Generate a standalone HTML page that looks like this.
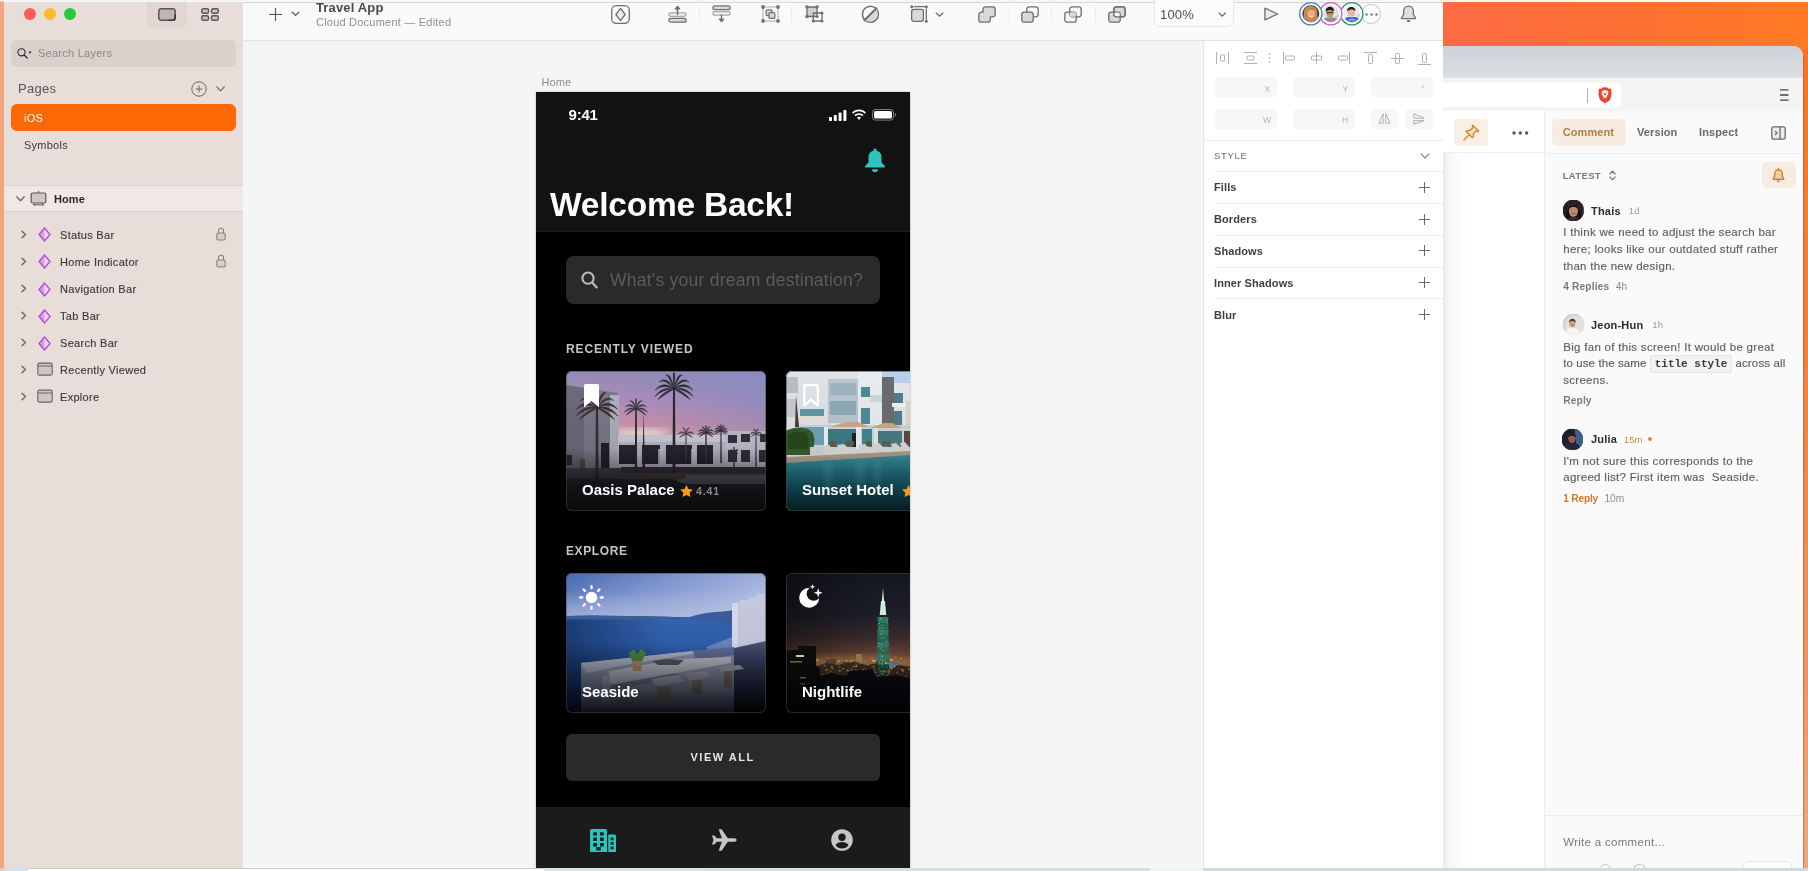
<!DOCTYPE html>
<html lang="en">
<head>
<meta charset="utf-8">
<title>Travel App</title>
<style>
*{box-sizing:border-box;margin:0;padding:0}
html,body{width:1808px;height:871px;overflow:hidden;background:#fff}
body{will-change:transform;font-family:"Liberation Sans",sans-serif;color:#3c3c3c;position:relative;-webkit-font-smoothing:antialiased}
.a{position:absolute}
.t{position:absolute;white-space:nowrap;line-height:16px;height:16px}
svg{position:absolute;overflow:visible}
/* ---------- base regions ---------- */
#leftstrip{left:0;top:0;width:4px;height:871px;background:#f3a67d}
#sidebar{left:3.5px;top:1.5px;width:239.500px;height:866.500px;background:#e8ddd8}
#toolbar{left:243px;top:1.5px;width:1200px;height:39px;background:#fafafa;border-bottom:1px solid #e2e2e2}
#canvas{left:243px;top:40.5px;width:960px;height:828px;background:#f5f5f5}
#inspector{left:1203px;top:40.5px;width:240px;height:828px;background:#fff;border-left:1px solid #e4e4e4}
#topline{left:0;top:0;width:1808px;height:2.500px;background:linear-gradient(90deg,transparent 0,transparent 243px,#d6d6d6 243px,#d6d6d6 1443px,transparent 1443px) 0 1.500px/100% 1px no-repeat,linear-gradient(#f6f4f3,#f6f4f3) 0 0/100% 1.500px no-repeat}
#botline{left:0;top:868px;width:1808px;height:3px;background:linear-gradient(90deg,#f2c4ac 0,#cfe3ea 8px,#cfe3ea 28px,transparent 28px),linear-gradient(90deg,#c9c9c6 0,#c9c9c6 544px,transparent 544px) 0 0/100% 1.400px no-repeat,linear-gradient(90deg,#fff 0,#fff 544px,#d6e3e6 544px,#d3e0e3 1150px,#eef3f3 1150px,#eef3f3 1203px,#cfdcdf 1203px)}
</style>
</head>
<body>
<div class="a" id="sidebar"></div>
<div class="a" id="toolbar"></div>
<div class="a" id="canvas"></div>
<div class="a" id="inspector"></div>
<div class="a" id="leftstrip"></div>
<div class="a" id="topline"></div>

<!--SIDEBAR-->
<style>
.sb{color:#4b4542;font-size:11px}
.chev{stroke:#6b6460;stroke-width:1.3;fill:none;stroke-linecap:round;stroke-linejoin:round}
</style>
<div class="a" style="left:24px;top:8px;width:12px;height:12px;border-radius:50%;background:#fd5d57"></div>
<div class="a" style="left:44px;top:8px;width:12px;height:12px;border-radius:50%;background:#fdbc2e"></div>
<div class="a" style="left:64px;top:8px;width:12px;height:12px;border-radius:50%;background:#28c840"></div>
<div class="a" style="left:146.5px;top:1.5px;width:40.5px;height:26px;border-radius:0 0 6px 6px;background:#e1d6d1"></div>
<svg style="left:158px;top:7.5px" width="18" height="13" viewBox="0 0 18 13"><rect x=".8" y=".8" width="16.4" height="11.4" rx="2.6" fill="#bdb6b2" stroke="#5d5753" stroke-width="1.5"/><path d="M10.5 12.2h4.1a2.6 2.6 0 0 0 2.6-2.6V6.5" fill="none" stroke="#3d3835" stroke-width="1.6"/></svg>
<svg style="left:201px;top:7.5px" width="18" height="13" viewBox="0 0 18 13"><g fill="#cbc2bd" stroke="#5d5753" stroke-width="1.4"><rect x=".7" y=".7" width="6.8" height="4.6" rx="1.6"/><rect x="10.5" y=".7" width="6.8" height="4.6" rx="1.6"/><rect x=".7" y="7.7" width="6.8" height="4.6" rx="1.6"/><rect x="10.5" y="7.7" width="6.8" height="4.6" rx="1.6"/></g></svg>
<!-- search -->
<div class="a" style="left:11.200px;top:40px;width:224.800px;height:26.500px;border-radius:5px;background:#dbd0cb"></div>
<svg style="left:16.5px;top:48px" width="16" height="11" viewBox="0 0 16 11"><circle cx="4.500" cy="4.300" r="3.600" fill="none" stroke="#2e2a28" stroke-width="1.100"/><path d="M7.200 7l3 3" stroke="#2e2a28" stroke-width="1.300" stroke-linecap="round"/><path d="M11.3 3.6h3.4l-1.7 2.2z" fill="#2e2a28"/></svg>
<div class="t sb" style="left:38px;top:45px;color:#8f8783;letter-spacing:.25px">Search Layers</div>
<!-- pages -->
<div class="t" style="left:18px;top:80.5px;font-size:13px;color:#5d5652;letter-spacing:.3px">Pages</div>
<svg style="left:190.5px;top:80.5px" width="16" height="16" viewBox="0 0 16 16"><circle cx="8" cy="8" r="7.2" fill="none" stroke="#6b6460" stroke-width="1"/><path d="M8 4.6v6.8M4.6 8h6.8" stroke="#6b6460" stroke-width="1"/></svg>
<svg style="left:216px;top:85.5px" width="9" height="6" viewBox="0 0 9 6"><path class="chev" d="M.7.8l3.8 4 3.8-4" style="stroke-width:1.1"/></svg>
<div class="a" style="left:11.200px;top:103.700px;width:224.800px;height:27px;border-radius:6px;background:#fc6806"></div>
<div class="t sb" style="left:24px;top:109.7px;color:#fff;letter-spacing:.2px">iOS</div>
<div class="t sb" style="left:24px;top:137px;letter-spacing:.25px;color:#3f3a37">Symbols</div>
<!-- home row -->
<div class="a" style="left:3.5px;top:184.5px;width:239.5px;height:27.5px;background:#efe8e4;border-top:1px solid #ddd2cc;border-bottom:1px solid #ddd2cc"></div>
<svg style="left:15.5px;top:195.5px" width="9" height="6" viewBox="0 0 9 6"><path class="chev" d="M.8.8l3.7 3.9L8.2.8"/></svg>
<svg style="left:30px;top:190.5px" width="17" height="15" viewBox="0 0 17 15"><path d="M8.5 0v2M4.5 12.5l-.8 2M12.5 12.5l.8 2" stroke="#5d5753" stroke-width="1.1"/><rect x="1.2" y="2" width="14.6" height="10" rx="1.5" fill="#cfc9c5" stroke="#5d5753" stroke-width="1.2"/><path d="M3.5 13.8h10" stroke="#5d5753" stroke-width="1"/></svg>
<div class="t sb" style="left:54px;top:191px;font-weight:bold;color:#2b2725;letter-spacing:.1px">Home</div>
<svg style="left:21px;top:230.1px" width="6" height="9" viewBox="0 0 6 9"><path class="chev" d="M1 1.200l3.500 3.300L1 7.800" style="stroke-width:1.400"/></svg>
<svg style="left:38px;top:226.4px" width="13" height="16" viewBox="0 0 13 16"><path d="M6.500 2L12 8.500l-5.500 6.500L1 8.500z" fill="#f3d8f8"/><path d="M6.500 2L1 8.500l5.500 6.500z" fill="#dc9bee"/><path d="M6.500 2L12 8.500l-5.500 6.500L1 8.500z" fill="none" stroke="#b04fd0" stroke-width="1.300" stroke-linejoin="round"/></svg>
<div class="t sb" style="left:60px;top:226.9px;letter-spacing:.3px;color:#3f3a37;-webkit-text-stroke:.15px #3f3a37">Status Bar</div>
<svg style="left:215.500px;top:226.8px" width="10" height="14" viewBox="0 0 10 14"><path d="M2.500 6V3.800a2.500 2.500 0 0 1 5 0V6" fill="none" stroke="#8a827d" stroke-width="1.100"/><rect x=".8" y="6" width="8.400" height="7" rx="1.500" fill="#d8cfca" stroke="#8a827d" stroke-width="1.100"/></svg>
<svg style="left:21px;top:257.1px" width="6" height="9" viewBox="0 0 6 9"><path class="chev" d="M1 1.200l3.500 3.300L1 7.800" style="stroke-width:1.400"/></svg>
<svg style="left:38px;top:253.4px" width="13" height="16" viewBox="0 0 13 16"><path d="M6.500 2L12 8.500l-5.500 6.500L1 8.500z" fill="#f3d8f8"/><path d="M6.500 2L1 8.500l5.500 6.500z" fill="#dc9bee"/><path d="M6.500 2L12 8.500l-5.500 6.500L1 8.500z" fill="none" stroke="#b04fd0" stroke-width="1.300" stroke-linejoin="round"/></svg>
<div class="t sb" style="left:60px;top:253.9px;letter-spacing:.3px;color:#3f3a37;-webkit-text-stroke:.15px #3f3a37">Home Indicator</div>
<svg style="left:215.500px;top:253.8px" width="10" height="14" viewBox="0 0 10 14"><path d="M2.500 6V3.800a2.500 2.500 0 0 1 5 0V6" fill="none" stroke="#8a827d" stroke-width="1.100"/><rect x=".8" y="6" width="8.400" height="7" rx="1.500" fill="#d8cfca" stroke="#8a827d" stroke-width="1.100"/></svg>
<svg style="left:21px;top:284.2px" width="6" height="9" viewBox="0 0 6 9"><path class="chev" d="M1 1.200l3.500 3.300L1 7.800" style="stroke-width:1.400"/></svg>
<svg style="left:38px;top:280.5px" width="13" height="16" viewBox="0 0 13 16"><path d="M6.500 2L12 8.500l-5.500 6.500L1 8.500z" fill="#f3d8f8"/><path d="M6.500 2L1 8.500l5.500 6.500z" fill="#dc9bee"/><path d="M6.500 2L12 8.500l-5.500 6.500L1 8.500z" fill="none" stroke="#b04fd0" stroke-width="1.300" stroke-linejoin="round"/></svg>
<div class="t sb" style="left:60px;top:281.0px;letter-spacing:.3px;color:#3f3a37;-webkit-text-stroke:.15px #3f3a37">Navigation Bar</div>
<svg style="left:21px;top:311.2px" width="6" height="9" viewBox="0 0 6 9"><path class="chev" d="M1 1.200l3.500 3.300L1 7.800" style="stroke-width:1.400"/></svg>
<svg style="left:38px;top:307.5px" width="13" height="16" viewBox="0 0 13 16"><path d="M6.500 2L12 8.500l-5.500 6.500L1 8.500z" fill="#f3d8f8"/><path d="M6.500 2L1 8.500l5.500 6.500z" fill="#dc9bee"/><path d="M6.500 2L12 8.500l-5.500 6.500L1 8.500z" fill="none" stroke="#b04fd0" stroke-width="1.300" stroke-linejoin="round"/></svg>
<div class="t sb" style="left:60px;top:308.0px;letter-spacing:.3px;color:#3f3a37;-webkit-text-stroke:.15px #3f3a37">Tab Bar</div>
<svg style="left:21px;top:338.2px" width="6" height="9" viewBox="0 0 6 9"><path class="chev" d="M1 1.200l3.500 3.300L1 7.800" style="stroke-width:1.400"/></svg>
<svg style="left:38px;top:334.5px" width="13" height="16" viewBox="0 0 13 16"><path d="M6.500 2L12 8.500l-5.500 6.500L1 8.500z" fill="#f3d8f8"/><path d="M6.500 2L1 8.500l5.500 6.500z" fill="#dc9bee"/><path d="M6.500 2L12 8.500l-5.500 6.500L1 8.500z" fill="none" stroke="#b04fd0" stroke-width="1.300" stroke-linejoin="round"/></svg>
<div class="t sb" style="left:60px;top:335.0px;letter-spacing:.3px;color:#3f3a37;-webkit-text-stroke:.15px #3f3a37">Search Bar</div>
<svg style="left:21px;top:365.1px" width="6" height="9" viewBox="0 0 6 9"><path class="chev" d="M1 1.200l3.500 3.300L1 7.800" style="stroke-width:1.400"/></svg>
<svg style="left:36.500px;top:362.3px" width="16" height="14" viewBox="0 0 16 14"><path d="M.8 2.600a1.500 1.500 0 0 1 1.500-1.500h11.400a1.500 1.500 0 0 1 1.500 1.500v9a1.500 1.500 0 0 1-1.500 1.500H2.300a1.500 1.500 0 0 1-1.500-1.500z" fill="#cfc7c3" stroke="#6b6460" stroke-width="1.100"/><path d="M.8 4h14.400" stroke="#6b6460" stroke-width="1"/></svg>
<div class="t sb" style="left:60px;top:361.9px;letter-spacing:.3px;color:#3f3a37;-webkit-text-stroke:.15px #3f3a37">Recently Viewed</div>
<svg style="left:21px;top:392.0px" width="6" height="9" viewBox="0 0 6 9"><path class="chev" d="M1 1.200l3.500 3.300L1 7.800" style="stroke-width:1.400"/></svg>
<svg style="left:36.500px;top:389.2px" width="16" height="14" viewBox="0 0 16 14"><path d="M.8 2.600a1.500 1.500 0 0 1 1.500-1.500h11.400a1.500 1.500 0 0 1 1.500 1.500v9a1.500 1.500 0 0 1-1.500 1.500H2.300a1.500 1.500 0 0 1-1.500-1.500z" fill="#cfc7c3" stroke="#6b6460" stroke-width="1.100"/><path d="M.8 4h14.400" stroke="#6b6460" stroke-width="1"/></svg>
<div class="t sb" style="left:60px;top:388.8px;letter-spacing:.3px;color:#3f3a37;-webkit-text-stroke:.15px #3f3a37">Explore</div>

<!--TOOLBAR-->
<style>
.ti{stroke:#6e6e6e;stroke-width:1.3;fill:none;stroke-linejoin:round;stroke-linecap:round}
.tf{fill:#d9d9d9}
.tsep{position:absolute;top:6px;width:1px;height:17px;background:#ececec}
</style>
<svg style="left:269px;top:8px" width="13" height="13" viewBox="0 0 13 13"><path d="M6.500 0v13M0 6.500h13" stroke="#555" stroke-width="1.1"/></svg>
<svg style="left:291px;top:11px" width="9" height="6" viewBox="0 0 9 6"><path d="M.8.800l3.700 3.600L8.200.8" stroke="#555" stroke-width="1.2" fill="none"/></svg>
<div class="t" style="left:316px;top:-.2px;font-size:13px;font-weight:bold;color:#4a4a4a;letter-spacing:.150px">Travel App</div>
<div class="t" style="left:316px;top:14px;font-size:11px;color:#8e8e8e;letter-spacing:.22px">Cloud Document — Edited</div>
<!-- create symbol -->
<svg style="left:611px;top:4.500px" width="19" height="19" viewBox="0 0 19 19"><rect x=".7" y=".7" width="17.600" height="17.600" rx="4.500" class="ti"/><path class="ti" d="M9.500 3.400l4.600 6.100-4.600 6.100-4.600-6.100z" style="fill:#ececec"/></svg>
<!-- forward -->
<svg style="left:668px;top:5px" width="19" height="18" viewBox="0 0 19 18"><path d="M9.500 1.500v8" class="ti"/><path d="M7 4L9.500 1l2.500 3z" fill="#6e6e6e" stroke="#6e6e6e" stroke-width="1" stroke-linejoin="round"/><rect x=".9" y="7.800" width="17.200" height="3.600" rx="1.800" class="ti" style="stroke:#a8a8a8;fill:#f0f0f0"/><path d="M9.500 5v4.500" class="ti"/><rect x=".9" y="13.300" width="17.200" height="3.800" rx="1.900" class="ti tf"/></svg>
<div class="tsep" style="left:699px"></div>
<!-- backward -->
<svg style="left:711.500px;top:5px" width="19" height="18" viewBox="0 0 19 18"><rect x=".9" y=".9" width="17.200" height="3.800" rx="1.900" class="ti tf"/><rect x=".9" y="6.600" width="17.200" height="3.600" rx="1.800" class="ti" style="stroke:#a8a8a8;fill:#f0f0f0"/><path d="M9.500 10.200v6" class="ti"/><path d="M7 14L9.500 17l2.500-3z" fill="#6e6e6e" stroke="#6e6e6e" stroke-width="1" stroke-linejoin="round"/></svg>
<!-- group -->
<svg style="left:761px;top:5px" width="19" height="18" viewBox="0 0 19 18"><path class="ti" d="M2 2h15v14H2z" style="stroke:#9a9a9a;stroke-width:1;stroke-dasharray:1.500 1.200"/><g fill="#727272"><circle cx="2" cy="2" r="1.900"/><circle cx="17" cy="2" r="1.900"/><circle cx="2" cy="16" r="1.900"/><circle cx="17" cy="16" r="1.900"/></g><rect x="5.200" y="4.800" width="5.800" height="5.800" rx="1.200" class="ti tf"/><rect x="8" y="7.600" width="5.800" height="5.800" rx="1.200" class="ti tf"/></svg>
<div class="tsep" style="left:791px"></div>
<!-- ungroup -->
<svg style="left:804.500px;top:5px" width="19" height="18" viewBox="0 0 19 18"><rect x="2" y="2" width="10" height="9.500" class="ti" style="fill:#cfcfcf"/><rect x="8.300" y="8" width="8.700" height="8" class="ti"/><g fill="#727272"><circle cx="2" cy="2" r="1.800"/><circle cx="12" cy="2" r="1.800"/><circle cx="2" cy="11.500" r="1.800"/><circle cx="12" cy="11.500" r="1.500"/><circle cx="8.300" cy="16" r="1.600"/><circle cx="17" cy="8" r="1.600"/><circle cx="17" cy="16" r="1.600"/></g></svg>
<!-- edit (circle slash) -->
<svg style="left:861px;top:5px" width="19" height="19" viewBox="0 0 19 19"><circle cx="9.400" cy="9.200" r="8" class="ti" style="stroke-width:1.500"/><path d="M3.900 14.900A8 8 0 0 0 15.100 3.700z" class="tf"/><path d="M3.400 15.200L15.400 3.200" class="ti" style="stroke-width:2"/></svg>
<!-- rotate/transform -->
<svg style="left:909.500px;top:5px" width="19" height="18" viewBox="0 0 19 18"><path class="ti" d="M4 1.700h10.500M16.300 4v10.500" stroke-dasharray="0"/><rect x="1.600" y="4.300" width="11.800" height="12" rx="2.200" class="ti tf"/><g fill="#6e6e6e"><circle cx="1.700" cy="1.700" r="1.500"/><circle cx="16.300" cy="1.700" r="1.500"/><circle cx="16.300" cy="16.300" r="1.500"/></g></svg>
<svg style="left:934.500px;top:11.500px" width="9" height="6" viewBox="0 0 9 6"><path d="M.8.800l3.700 3.400L8.200.8" stroke="#666" stroke-width="1.200" fill="none"/></svg>
<!-- boolean ops -->
<svg style="left:978px;top:5.500px" width="18" height="17" viewBox="0 0 18 17"><path class="ti tf" d="M7.500.8h7.200a2.500 2.500 0 0 1 2.500 2.500v5a2.500 2.500 0 0 1-2.500 2.500h-2.400v2.900a2.500 2.500 0 0 1-2.500 2.500H3.300a2.500 2.500 0 0 1-2.500-2.500v-5a2.500 2.500 0 0 1 2.500-2.500H5V3.300A2.500 2.500 0 0 1 7.500.8z"/></svg>
<div class="tsep" style="left:1009px"></div>
<svg style="left:1021px;top:5.500px" width="18" height="17" viewBox="0 0 18 17"><rect x="5.800" y=".8" width="11.400" height="10" rx="2.500" class="ti" fill="#fafafa"/><rect x=".8" y="6.200" width="11.400" height="10" rx="2.500" class="ti tf"/></svg>
<div class="tsep" style="left:1051px"></div>
<svg style="left:1064px;top:5.500px" width="18" height="17" viewBox="0 0 18 17"><rect x="5.800" y=".8" width="11.400" height="10" rx="2.500" class="ti" fill="none"/><rect x=".8" y="6.200" width="11.400" height="10" rx="2.500" class="ti" fill="none"/><rect x="5.800" y="6.200" width="6.400" height="4.600" rx="1.500" class="tf"/></svg>
<div class="tsep" style="left:1094.500px"></div>
<svg style="left:1107.500px;top:5.500px" width="18" height="17" viewBox="0 0 18 17"><rect x="5.800" y=".8" width="11.400" height="10" rx="2.500" class="ti tf"/><rect x=".8" y="6.200" width="11.400" height="10" rx="2.500" class="ti tf"/><rect x="6.400" y="6.800" width="5.200" height="3.400" rx="1" fill="#fafafa"/><rect x="5.800" y=".8" width="11.400" height="10" rx="2.500" class="ti" fill="none"/></svg>
<!-- zoom -->
<div class="a" style="left:1153.500px;top:-4px;width:80.500px;height:31px;border:1px solid #e6e6e6;border-radius:6px;background:#fcfcfc"></div>
<div class="t" style="left:1160px;top:6.500px;font-size:13px;color:#4d4d4d;letter-spacing:.2px">100%</div>
<svg style="left:1217.500px;top:11.500px" width="9" height="6" viewBox="0 0 9 6"><path d="M.8.800l3.400 3.300L7.600.8" stroke="#666" stroke-width="1.200" fill="none"/></svg>
<!-- play -->
<svg style="left:1263.500px;top:7px" width="15" height="14" viewBox="0 0 15 14"><path d="M.9 1.100l12.800 5.900L.9 12.900z" class="ti" style="fill:#ececec"/></svg>
<!-- avatars -->
<div class="a" style="left:1361.200px;top:4.100px;width:19.600px;height:19.600px;border-radius:50%;background:#fcfcfc;border:1.200px solid #c6c6c6"></div>
<svg style="left:1363.500px;top:12.500px" width="15" height="3" viewBox="0 0 15 3"><g fill="#7c7c7c"><circle cx="2.500" cy="1.500" r="1.250"/><circle cx="7.500" cy="1.500" r="1.250"/><circle cx="12.500" cy="1.500" r="1.250"/></g></svg>
<svg style="left:1339.80px;top:2.10px" width="23.60" height="23.60" viewBox="-11.80 -11.80 23.60 23.60"><defs><clipPath id="avb"><circle r="9.20"/></clipPath></defs><circle r="11.70" fill="#fdfdfd"/><circle r="11.15" fill="none" stroke="#2f9460" stroke-width="1.3"/><g clip-path="url(#avb)" transform="scale(0.920)"><rect x="-10" y="-10" width="20" height="20" fill="#e9eef3"/><path d="M-10 10C-9 3.500-4 3 0 4 4 3 9 3.500 10 10z" fill="#3d66d8"/><ellipse cx="-.5" cy="-1.500" rx="4" ry="4.800" fill="#e2b9a0"/><path d="M-5-2.500C-6-9 4.500-9 4-3 1.500-5.200-2-5.500-5-2.500z" fill="#2a2220"/><path d="M4 2C7-1 9 0 10 2V5z" fill="#cfd6de"/><path d="M-3 6.500h6" stroke="#9db4f0" stroke-width="1.500"/></g></svg>
<svg style="left:1319.20px;top:2.10px" width="23.60" height="23.60" viewBox="-11.80 -11.80 23.60 23.60"><defs><clipPath id="avg"><circle r="9.20"/></clipPath></defs><circle r="11.70" fill="#fdfdfd"/><circle r="11.15" fill="none" stroke="#cf5fc4" stroke-width="1.3"/><g clip-path="url(#avg)" transform="scale(0.920)"><rect x="-10" y="-10" width="20" height="20" fill="#dfe4e1"/><path d="M-10 10C-9 4-4 3.500-1 4.500 3 3.500 8 4.500 10 10z" fill="#8d8f92"/><ellipse cx="-1" cy="-1" rx="4" ry="5" fill="#c2906f"/><path d="M-5.500-2.500C-6-9 4-9.500 3.500-2.500 1-4.800-3-4.800-5.500-2.500z" fill="#1e1a19"/><path d="M-4.800-1.200H2.800" stroke="#2a2422" stroke-width="1.100"/><path d="M3 4L10 0V6z" fill="#c9ccc9"/></g></svg>
<svg style="left:1298.70px;top:2.10px" width="23.60" height="23.60" viewBox="-11.80 -11.80 23.60 23.60"><defs><clipPath id="avw"><circle r="9.20"/></clipPath></defs><circle r="11.70" fill="#fdfdfd"/><circle r="11.15" fill="none" stroke="#3a80d6" stroke-width="1.3"/><g clip-path="url(#avw)" transform="scale(0.920)"><rect x="-10" y="-10" width="20" height="20" fill="#3b2b22"/><path d="M-7.500-2C-7.500-10 5.500-11 7-3L8 10H-8.500z" fill="#c48a55"/><ellipse cx=".5" cy="-.5" rx="4.200" ry="5.200" fill="#e3b08c"/><path d="M-4.300-3C-2-7.500 3-7.500 4.800-3 2-4.800-1-5.200-4.300-3z" fill="#b67a48"/><path d="M-10 10C-8 5.500-3 5 0 6.500 3 5 8 5.500 10 10z" fill="#e2793f"/><path d="M-1.500 2.400Q.5 3.900 2.500 2.400" stroke="#fff" stroke-width="1" fill="none"/></g></svg>

<!-- bell -->
<svg style="left:1399.500px;top:5px" width="17" height="18" viewBox="0 0 17 18"><path class="ti" style="fill:#dedede" d="M8.500 1.200c-3 0-4.900 2.200-4.900 5.100v3.200L1.600 12.600c-.3.500 0 1.100.6 1.100h12.600c.6 0 .9-.6.600-1.100L13.400 9.500V6.300c0-2.900-1.900-5.100-4.900-5.100z"/><path d="M6.500 15.300a2 2 0 0 0 4 0z" fill="#6e6e6e"/></svg>

<!--PHONE-->
<style>
#ab{left:536px;top:92px;width:374.300px;height:775.500px;background:#000;overflow:hidden;box-shadow:0 0 0 1px rgba(0,0,0,.05),0 1px 4px rgba(0,0,0,.12)}
#ab .hd{left:0;top:0;width:375px;height:139.500px;background:#121212;border-bottom:1px solid #1d1d1d}
.ph{color:#fff;font-weight:bold}
.card{position:absolute;width:200px;height:139.500px;border-radius:6px;overflow:hidden;background:#222;box-shadow:inset 0 0 0 1px rgba(255,255,255,.08)}
.card svg{left:0;top:0}
.card .ov{position:absolute;left:0;top:0;width:100%;height:100%;border-radius:6px;box-shadow:inset 0 0 0 1px rgba(70,70,70,.55)}
.sec{position:absolute;font-size:12px;font-weight:bold;color:#c4c4c4;letter-spacing:.900px;white-space:nowrap;line-height:14px}
.ct{position:absolute;font-size:15px;font-weight:bold;color:#fff;white-space:nowrap;line-height:16px;letter-spacing:0}
</style>
<div class="t" style="left:541.500px;top:74px;font-size:11px;color:#8c8c8c;letter-spacing:.1px">Home</div>
<div class="a" id="ab">
 <div class="a hd"></div>
 <div class="t ph" style="left:32.500px;top:15px;font-size:15px;letter-spacing:-.2px">9:41</div>
 <!-- status icons -->
 <svg style="left:293px;top:17.500px" width="18" height="11" viewBox="0 0 18 11"><g fill="#fff"><rect x="0" y="7" width="3" height="4" rx=".8"/><rect x="4.800" y="5" width="3" height="6" rx=".8"/><rect x="9.600" y="2.600" width="3" height="8.400" rx=".8"/><rect x="14.400" y="0" width="3" height="11" rx=".8"/></g></svg>
 <svg style="left:315px;top:17px" width="16" height="12" viewBox="0 0 16 12"><path d="M8 2.300c2.300 0 4.400.9 5.900 2.400l1.100-1.200C13.200 1.700 10.700.6 8 .6S2.800 1.700 1 3.500l1.100 1.200C3.600 3.200 5.700 2.300 8 2.300zm0 3.600c1.300 0 2.500.5 3.400 1.400l1.100-1.200C11.300 4.900 9.700 4.200 8 4.200s-3.300.7-4.500 1.900l1.100 1.200c.9-.9 2.100-1.400 3.400-1.400zM8 7.700c-.8 0-1.500.3-2 .9L8 11l2-2.400c-.5-.6-1.200-.9-2-.9z" fill="#fff"/></svg>
 <svg style="left:335.500px;top:17.300px" width="25" height="12" viewBox="0 0 25 12"><rect x=".5" y=".5" width="21" height="10.600" rx="3" fill="none" stroke="rgba(255,255,255,.45)" stroke-width="1"/><rect x="2" y="2" width="18" height="7.600" rx="1.700" fill="#fff"/><path d="M22.800 4v3.600c.8-.3 1.300-1 1.300-1.800s-.5-1.500-1.300-1.800z" fill="rgba(255,255,255,.5)"/></svg>
 <!-- bell -->
 <svg style="left:328px;top:56px" width="22" height="25" viewBox="0 0 22 25"><path fill="#2ec4bd" d="M11 .6c-.9 0-1.500.6-1.500 1.400v.5C6.400 3.200 4.500 5.900 4.500 9.200v5.200L1.100 18c-.5.600-.1 1.500.7 1.500h18.400c.8 0 1.200-.9.700-1.500l-3.400-3.600V9.200c0-3.300-1.900-6-5-6.700V2c0-.8-.6-1.400-1.500-1.400zM8 21.200a3 3 0 0 0 6 0z"/></svg>
 <div class="t ph" id="wb" style="left:14px;top:93px;font-size:33.500px;line-height:40px;height:40px;letter-spacing:-.230px">Welcome Back!</div>
 <!-- search -->
 <div class="a" style="left:30px;top:164px;width:314px;height:47.500px;border-radius:8px;background:#2a2a2a"></div>
 <svg style="left:45px;top:179px" width="17" height="18" viewBox="0 0 17 18"><circle cx="7" cy="7.200" r="5.600" fill="none" stroke="#bdbdbd" stroke-width="2"/><path d="M11.200 11.600l4.500 4.800" stroke="#bdbdbd" stroke-width="2.200" stroke-linecap="round"/></svg>
 <div class="t" id="plh" style="left:74px;top:177.500px;font-size:17.500px;line-height:20px;height:20px;color:#5c5c5c;letter-spacing:.250px">What's your dream destination?</div>

 <div class="sec" id="rv" style="left:30px;top:250px">RECENTLY VIEWED</div>
 <div class="card" id="c1" style="left:30px;top:279.400px"><!--C1--><svg width="200" height="140" viewBox="0 0 200 140"><defs><linearGradient id="s1" x1="0" y1="0" x2="0" y2="1"><stop offset="0" stop-color="#8f8bb8"/><stop offset=".45" stop-color="#b893c4"/><stop offset=".75" stop-color="#e39ab4"/><stop offset="1" stop-color="#f4c0b8"/></linearGradient><linearGradient id="s1b" x1="0" y1="0" x2="1" y2="0"><stop offset="0" stop-color="#9a86b0" stop-opacity=".0"/><stop offset="1" stop-color="#7f8fc8" stop-opacity=".55"/></linearGradient><linearGradient id="g1" x1="0" y1="0" x2="0" y2="1"><stop offset="0" stop-color="#000" stop-opacity="0"/><stop offset=".55" stop-color="#000" stop-opacity=".1"/><stop offset=".8" stop-color="#000" stop-opacity=".6"/><stop offset="1" stop-color="#000" stop-opacity=".82"/></linearGradient><filter id="b1" x="-5%" y="-5%" width="110%" height="110%"><feGaussianBlur stdDeviation=".7"/></filter><filter id="b1b" x="-20%" y="-20%" width="140%" height="140%"><feGaussianBlur stdDeviation="4"/></filter></defs><rect width="200" height="70" fill="url(#s1)"/><rect width="200" height="70" fill="url(#s1b)"/><ellipse cx="75" cy="63" rx="28" ry="5" fill="#fff3e6" filter="url(#b1b)" opacity=".9"/><g filter="url(#b1)"><!-- left wall --><path d="M0 14L40 20L52 22V108H0z" fill="#7d7c8c"/><path d="M0 14L18 17V108H0z" fill="#6e6d7c"/><rect x="44" y="24" width="9" height="84" fill="#b4b3c2"/><rect x="35" y="72" width="8" height="36" fill="#23222a"/><rect x="0" y="84" width="6" height="10" fill="#2b2a33"/><rect x="14" y="88" width="5" height="20" fill="#56533f"/><!-- main building --><rect x="52" y="64" width="112" height="34" fill="#bdbccb"/><rect x="52" y="64" width="112" height="7" fill="#d2d1de"/><g fill="#2a2830"><rect x="53" y="74" width="17" height="19"/><rect x="76" y="74" width="18" height="19"/><rect x="100" y="74" width="26" height="19"/><rect x="131" y="74" width="16" height="19"/></g><g fill="#c9c8d4" opacity=".8"><rect x="92" y="78" width="5" height="18"/><rect x="125" y="78" width="5" height="18"/><rect x="70" y="80" width="4" height="16"/></g><!-- right building --><rect x="159" y="60" width="41" height="38" fill="#c4c3d2"/><g fill="#34323c"><rect x="162" y="64" width="9" height="8"/><rect x="175" y="63" width="9" height="8"/><rect x="194" y="63" width="6" height="8"/><rect x="162" y="79" width="9" height="12"/><rect x="175" y="79" width="9" height="12"/><rect x="193" y="79" width="7" height="12"/></g><!-- ground --><rect x="0" y="97" width="200" height="43" fill="#4b4953"/><rect x="55" y="96" width="145" height="6" fill="#3a3842"/><path d="M120 104H200V113H105z" fill="#74727f"/><path d="M0 108H105L120 113H200V140H0z" fill="#34333b"/><rect x="78" y="105" width="42" height="2.500" fill="#5b4b3a"/><!-- palms --><path d="M29.9 36L32.0 36L32.6 108L29.4 108z" fill="#3a2f35"/><path d="M31 37Q20.2 38.9 13.3 48.7Q22.3 41.9 31 37z" fill="#3a2f35" stroke="#3a2f35" stroke-width=".5" stroke-linejoin="round"/><path d="M31 37Q18.7 33.3 10.0 45.0Q20.2 36.8 31 37z" fill="#3a2f35" stroke="#3a2f35" stroke-width=".5" stroke-linejoin="round"/><path d="M31 37Q19.5 27.2 10.4 38.1Q19.8 30.9 31 37z" fill="#3a2f35" stroke="#3a2f35" stroke-width=".5" stroke-linejoin="round"/><path d="M31 37Q22.6 21.9 14.5 29.4Q21.2 25.3 31 37z" fill="#3a2f35" stroke="#3a2f35" stroke-width=".5" stroke-linejoin="round"/><path d="M31 37Q27.5 18.7 21.8 21.8Q24.4 20.8 31 37z" fill="#3a2f35" stroke="#3a2f35" stroke-width=".5" stroke-linejoin="round"/><path d="M31 37Q32.9 18.4 31.0 18.8Q29.1 18.4 31 37z" fill="#3a2f35" stroke="#3a2f35" stroke-width=".5" stroke-linejoin="round"/><path d="M31 37Q37.6 20.8 40.2 21.8Q34.5 18.7 31 37z" fill="#3a2f35" stroke="#3a2f35" stroke-width=".5" stroke-linejoin="round"/><path d="M31 37Q40.8 25.3 47.5 29.4Q39.4 21.9 31 37z" fill="#3a2f35" stroke="#3a2f35" stroke-width=".5" stroke-linejoin="round"/><path d="M31 37Q42.2 30.9 51.6 38.1Q42.5 27.2 31 37z" fill="#3a2f35" stroke="#3a2f35" stroke-width=".5" stroke-linejoin="round"/><path d="M31 37Q41.8 36.8 52.0 45.0Q43.3 33.3 31 37z" fill="#3a2f35" stroke="#3a2f35" stroke-width=".5" stroke-linejoin="round"/><path d="M31 37Q39.7 41.9 48.7 48.7Q41.8 38.9 31 37z" fill="#3a2f35" stroke="#3a2f35" stroke-width=".5" stroke-linejoin="round"/><path d="M69.2 37L70.8 37L71.2 101L68.8 101z" fill="#352c34"/><path d="M70 38Q64.1 38.6 60.3 44.0Q65.3 40.2 70 38z" fill="#352c34" stroke="#352c34" stroke-width=".5" stroke-linejoin="round"/><path d="M70 38Q63.3 34.7 58.4 41.1Q64.0 36.6 70 38z" fill="#352c34" stroke="#352c34" stroke-width=".5" stroke-linejoin="round"/><path d="M70 38Q64.4 30.6 59.6 35.8Q64.2 32.7 70 38z" fill="#352c34" stroke="#352c34" stroke-width=".5" stroke-linejoin="round"/><path d="M70 38Q67.4 27.9 63.9 30.1Q65.9 29.2 70 38z" fill="#352c34" stroke="#352c34" stroke-width=".5" stroke-linejoin="round"/><path d="M70 38Q71.0 27.4 70.0 27.6Q69.0 27.4 70 38z" fill="#352c34" stroke="#352c34" stroke-width=".5" stroke-linejoin="round"/><path d="M70 38Q74.1 29.2 76.1 30.1Q72.6 27.9 70 38z" fill="#352c34" stroke="#352c34" stroke-width=".5" stroke-linejoin="round"/><path d="M70 38Q75.8 32.7 80.4 35.8Q75.6 30.6 70 38z" fill="#352c34" stroke="#352c34" stroke-width=".5" stroke-linejoin="round"/><path d="M70 38Q76.0 36.6 81.6 41.1Q76.7 34.7 70 38z" fill="#352c34" stroke="#352c34" stroke-width=".5" stroke-linejoin="round"/><path d="M70 38Q74.7 40.2 79.7 44.0Q75.9 38.6 70 38z" fill="#352c34" stroke="#352c34" stroke-width=".5" stroke-linejoin="round"/><path d="M77.500 40L79 97H76.500z" fill="#2d2a30"/><path d="M107.0 17L109.0 17L109.5 102L106.5 102z" fill="#2f2a33"/><path d="M108 18Q98.1 19.6 91.9 28.6Q100.1 22.4 108 18z" fill="#2f2a33" stroke="#2f2a33" stroke-width=".5" stroke-linejoin="round"/><path d="M108 18Q96.8 14.6 88.9 25.2Q98.2 17.7 108 18z" fill="#2f2a33" stroke="#2f2a33" stroke-width=".5" stroke-linejoin="round"/><path d="M108 18Q97.5 9.0 89.2 18.9Q97.9 12.4 108 18z" fill="#2f2a33" stroke="#2f2a33" stroke-width=".5" stroke-linejoin="round"/><path d="M108 18Q100.4 4.1 93.0 11.0Q99.1 7.3 108 18z" fill="#2f2a33" stroke="#2f2a33" stroke-width=".5" stroke-linejoin="round"/><path d="M108 18Q104.8 1.3 99.7 4.1Q102.0 3.1 108 18z" fill="#2f2a33" stroke="#2f2a33" stroke-width=".5" stroke-linejoin="round"/><path d="M108 18Q109.7 1.0 108.0 1.4Q106.3 1.0 108 18z" fill="#2f2a33" stroke="#2f2a33" stroke-width=".5" stroke-linejoin="round"/><path d="M108 18Q114.0 3.1 116.3 4.1Q111.2 1.3 108 18z" fill="#2f2a33" stroke="#2f2a33" stroke-width=".5" stroke-linejoin="round"/><path d="M108 18Q116.9 7.3 123.0 11.0Q115.6 4.1 108 18z" fill="#2f2a33" stroke="#2f2a33" stroke-width=".5" stroke-linejoin="round"/><path d="M108 18Q118.1 12.4 126.8 18.9Q118.5 9.0 108 18z" fill="#2f2a33" stroke="#2f2a33" stroke-width=".5" stroke-linejoin="round"/><path d="M108 18Q117.8 17.7 127.1 25.2Q119.2 14.6 108 18z" fill="#2f2a33" stroke="#2f2a33" stroke-width=".5" stroke-linejoin="round"/><path d="M108 18Q115.9 22.4 124.1 28.6Q117.9 19.6 108 18z" fill="#2f2a33" stroke="#2f2a33" stroke-width=".5" stroke-linejoin="round"/><path d="M139.4 61L140.6 61L140.9 92L139.1 92z" fill="#3a3340"/><path d="M140 62Q135.7 62.0 133.1 65.9Q136.8 63.4 140 62z" fill="#3a3340" stroke="#3a3340" stroke-width=".5" stroke-linejoin="round"/><path d="M140 62Q135.2 59.2 131.8 63.9Q135.8 60.9 140 62z" fill="#3a3340" stroke="#3a3340" stroke-width=".5" stroke-linejoin="round"/><path d="M140 62Q136.1 56.3 132.6 60.2Q135.9 58.1 140 62z" fill="#3a3340" stroke="#3a3340" stroke-width=".5" stroke-linejoin="round"/><path d="M140 62Q138.3 54.4 135.7 56.1Q136.9 55.6 140 62z" fill="#3a3340" stroke="#3a3340" stroke-width=".5" stroke-linejoin="round"/><path d="M140 62Q140.9 54.2 140.0 54.4Q139.1 54.2 140 62z" fill="#3a3340" stroke="#3a3340" stroke-width=".5" stroke-linejoin="round"/><path d="M140 62Q143.1 55.6 144.3 56.1Q141.7 54.4 140 62z" fill="#3a3340" stroke="#3a3340" stroke-width=".5" stroke-linejoin="round"/><path d="M140 62Q144.1 58.1 147.4 60.2Q143.9 56.3 140 62z" fill="#3a3340" stroke="#3a3340" stroke-width=".5" stroke-linejoin="round"/><path d="M140 62Q144.2 60.9 148.2 63.9Q144.8 59.2 140 62z" fill="#3a3340" stroke="#3a3340" stroke-width=".5" stroke-linejoin="round"/><path d="M140 62Q143.2 63.4 146.9 65.9Q144.3 62.0 140 62z" fill="#3a3340" stroke="#3a3340" stroke-width=".5" stroke-linejoin="round"/><path d="M154.5 59L155.5 59L155.8 92L154.2 92z" fill="#3a3340"/><path d="M155 60Q151.4 59.7 149.4 63.1Q152.4 61.1 155 60z" fill="#3a3340" stroke="#3a3340" stroke-width=".5" stroke-linejoin="round"/><path d="M155 60Q151.0 57.4 148.2 61.4Q151.6 59.1 155 60z" fill="#3a3340" stroke="#3a3340" stroke-width=".5" stroke-linejoin="round"/><path d="M155 60Q151.8 55.0 148.9 58.3Q151.6 56.8 155 60z" fill="#3a3340" stroke="#3a3340" stroke-width=".5" stroke-linejoin="round"/><path d="M155 60Q153.7 53.5 151.4 55.0Q152.4 54.7 155 60z" fill="#3a3340" stroke="#3a3340" stroke-width=".5" stroke-linejoin="round"/><path d="M155 60Q155.9 53.4 155.0 53.5Q154.1 53.4 155 60z" fill="#3a3340" stroke="#3a3340" stroke-width=".5" stroke-linejoin="round"/><path d="M155 60Q157.6 54.7 158.6 55.0Q156.3 53.5 155 60z" fill="#3a3340" stroke="#3a3340" stroke-width=".5" stroke-linejoin="round"/><path d="M155 60Q158.4 56.8 161.1 58.3Q158.2 55.0 155 60z" fill="#3a3340" stroke="#3a3340" stroke-width=".5" stroke-linejoin="round"/><path d="M155 60Q158.4 59.1 161.8 61.4Q159.0 57.4 155 60z" fill="#3a3340" stroke="#3a3340" stroke-width=".5" stroke-linejoin="round"/><path d="M155 60Q157.6 61.1 160.6 63.1Q158.6 59.7 155 60z" fill="#3a3340" stroke="#3a3340" stroke-width=".5" stroke-linejoin="round"/><path d="M119.5 62L120.5 62L120.7 90L119.3 90z" fill="#4a3f48"/><path d="M120 63Q115.9 62.9 113.6 66.6Q117.0 64.3 120 63z" fill="#4a3f48" stroke="#4a3f48" stroke-width=".5" stroke-linejoin="round"/><path d="M120 63Q115.8 58.6 112.5 62.8Q116.0 60.4 120 63z" fill="#4a3f48" stroke="#4a3f48" stroke-width=".5" stroke-linejoin="round"/><path d="M120 63Q118.9 55.6 116.7 56.8Q117.4 56.6 120 63z" fill="#4a3f48" stroke="#4a3f48" stroke-width=".5" stroke-linejoin="round"/><path d="M120 63Q122.6 56.6 123.3 56.8Q121.1 55.6 120 63z" fill="#4a3f48" stroke="#4a3f48" stroke-width=".5" stroke-linejoin="round"/><path d="M120 63Q124.0 60.4 127.5 62.8Q124.2 58.6 120 63z" fill="#4a3f48" stroke="#4a3f48" stroke-width=".5" stroke-linejoin="round"/><path d="M120 63Q123.0 64.3 126.4 66.6Q124.1 62.9 120 63z" fill="#4a3f48" stroke="#4a3f48" stroke-width=".5" stroke-linejoin="round"/><path d="M189.5 62L190.5 62L190.8 96L189.2 96z" fill="#4a4350"/><path d="M190 63Q186.8 62.5 185.2 65.5Q187.9 63.9 190 63z" fill="#4a4350" stroke="#4a4350" stroke-width=".5" stroke-linejoin="round"/><path d="M190 63Q186.8 59.2 184.4 62.6Q187.0 61.0 190 63z" fill="#4a4350" stroke="#4a4350" stroke-width=".5" stroke-linejoin="round"/><path d="M190 63Q189.4 57.1 187.5 58.1Q187.9 58.1 190 63z" fill="#4a4350" stroke="#4a4350" stroke-width=".5" stroke-linejoin="round"/><path d="M190 63Q192.1 58.1 192.5 58.1Q190.6 57.1 190 63z" fill="#4a4350" stroke="#4a4350" stroke-width=".5" stroke-linejoin="round"/><path d="M190 63Q193.0 61.0 195.6 62.6Q193.2 59.2 190 63z" fill="#4a4350" stroke="#4a4350" stroke-width=".5" stroke-linejoin="round"/><path d="M190 63Q192.1 63.9 194.8 65.5Q193.2 62.5 190 63z" fill="#4a4350" stroke="#4a4350" stroke-width=".5" stroke-linejoin="round"/><path d="M167.6 80L168.4 80L168.7 96L167.3 96z" fill="#3a3340"/><path d="M168 81Q165.3 80.3 164.0 82.9Q166.3 81.7 168 81z" fill="#3a3340" stroke="#3a3340" stroke-width=".5" stroke-linejoin="round"/><path d="M168 81Q165.7 76.9 163.7 79.5Q165.5 78.7 168 81z" fill="#3a3340" stroke="#3a3340" stroke-width=".5" stroke-linejoin="round"/><path d="M168 81Q168.9 76.0 168.0 76.1Q167.1 76.0 168 81z" fill="#3a3340" stroke="#3a3340" stroke-width=".5" stroke-linejoin="round"/><path d="M168 81Q170.5 78.7 172.3 79.5Q170.3 76.9 168 81z" fill="#3a3340" stroke="#3a3340" stroke-width=".5" stroke-linejoin="round"/><path d="M168 81Q169.7 81.7 172.0 82.9Q170.7 80.3 168 81z" fill="#3a3340" stroke="#3a3340" stroke-width=".5" stroke-linejoin="round"/></g><rect width="200" height="140" fill="url(#g1)"/></svg><!--/C1--><div class="ov"></div></div>
 <div class="card" id="c2" style="left:249.500px;top:279.400px"><!--C2--><svg width="200" height="140" viewBox="0 0 200 140"><defs><linearGradient id="p2" x1="0" y1="0" x2="0" y2="1"><stop offset="0" stop-color="#3a8a96"/><stop offset=".35" stop-color="#237886"/><stop offset="1" stop-color="#0f4653"/></linearGradient><linearGradient id="g2" x1="0" y1="0" x2="0" y2="1"><stop offset="0" stop-color="#000" stop-opacity="0"/><stop offset=".6" stop-color="#000" stop-opacity=".05"/><stop offset=".85" stop-color="#001015" stop-opacity=".45"/><stop offset="1" stop-color="#000" stop-opacity=".62"/></linearGradient><filter id="b2" x="-5%" y="-5%" width="110%" height="110%"><feGaussianBlur stdDeviation=".7"/></filter><filter id="b2b" x="-20%" y="-20%" width="140%" height="140%"><feGaussianBlur stdDeviation="2"/></filter></defs><rect width="200" height="140" fill="#d4dade"/><g filter="url(#b2)"><rect x="94" y="0" width="106" height="12" fill="#b6d0ea"/><!-- building --><rect x="0" y="0" width="96" height="60" fill="#dfe3e6"/><rect x="0" y="6" width="12" height="16" fill="#b8bec4"/><rect x="0" y="28" width="10" height="18" fill="#c8ccd0"/><rect x="42" y="8" width="30" height="44" fill="#b9c6cf"/><rect x="44" y="12" width="26" height="12" fill="#9fb4c0"/><rect x="44" y="30" width="26" height="14" fill="#8faab8"/><rect x="72" y="0" width="24" height="62" fill="#e9ecee"/><rect x="75" y="16" width="9" height="10" fill="#4d8a96"/><rect x="75" y="37" width="9" height="16" fill="#4b8d99"/><rect x="84" y="24" width="14" height="7" fill="#ccd5da"/><rect x="96" y="6" width="12" height="56" fill="#6c6c6e"/><rect x="108" y="12" width="30" height="50" fill="#e4e7ea"/><rect x="108" y="22" width="9" height="10" fill="#4f7e8c"/><rect x="108" y="40" width="8" height="14" fill="#4f7e8c"/><rect x="106" y="32" width="16" height="4" fill="#f0f2f3"/><rect x="120" y="30" width="20" height="34" fill="#dcd6c8"/><!-- first floor/balcony --><rect x="12" y="44" width="30" height="6" fill="#e6e2dc"/><rect x="14" y="38" width="24" height="7" fill="#5f97a6"/><!-- ground floor --><rect x="12" y="54" width="130" height="24" fill="#cfd6da"/><rect x="14" y="56" width="24" height="18" fill="#6fa3b8"/><rect x="42" y="58" width="28" height="18" fill="#3d7c88"/><rect x="76" y="58" width="10" height="18" fill="#3f8792"/><rect x="92" y="60" width="24" height="16" fill="#4b7a84"/><rect x="118" y="60" width="22" height="16" fill="#5a4a42"/><rect x="66" y="62" width="5" height="14" fill="#1d2326"/><rect x="70" y="56" width="5" height="22" fill="#eef0f1"/><rect x="38" y="56" width="4" height="22" fill="#eef0f1"/><rect x="88" y="56" width="4" height="22" fill="#e4e6e8"/><!-- umbrellas --><path d="M44 56L60 51H72L84 56z" fill="#c9ab8b"/><path d="M84 57L98 52H106L116 57z" fill="#c7a98a"/><path d="M116 57L126 54H142V57z" fill="#d9c9b4"/><!-- palm --><path d="M10 24L13 56H9z" fill="#4c3e30"/>FRONDS2<!-- bush --><path d="M0 60Q10 54 22 58Q30 62 28 74L26 84H0z" fill="#345a2c"/><path d="M2 64Q10 58 20 62Q24 68 22 78H2z" fill="#27481f"/><rect x="24" y="76" width="22" height="8" fill="#cfd2d4"/><!-- loungers --><g fill="#d9d7d2"><path d="M37 75L44 74L50 82V85H40z"/><path d="M51 74L58 73L66 81V85H55z"/><path d="M72 74L79 73L86 80V84H76z"/><path d="M87 73L93 72L100 79V83H90z"/><path d="M105 73L110 72L116 78V82H108z"/><path d="M114 72L119 71L124 77V81H117z"/></g><g fill="#6a5a50"><rect x="44" y="70" width="6" height="6"/><rect x="60" y="70" width="8" height="5"/><rect x="80" y="70" width="6" height="5"/><rect x="96" y="70" width="8" height="5"/></g><!-- pool edge + pool --><path d="M0 86L125 80V86L0 93z" fill="#a89886"/><path d="M0 92L125 84V140H0z" fill="url(#p2)"/><g fill="#5fa5b0" opacity=".35" filter="url(#b2b)"><rect x="38" y="92" width="8" height="26"/><rect x="70" y="90" width="8" height="30"/><rect x="88" y="90" width="6" height="24"/></g></g><rect width="200" height="140" fill="url(#g2)"/></svg><!--/C2--><div class="ov"></div></div>
 <div class="sec" id="ex" style="left:30px;top:451.500px;letter-spacing:.600px">EXPLORE</div>
 <div class="card" id="c3" style="left:30px;top:481.400px"><!--C3--><svg width="200" height="140" viewBox="0 0 200 140"><defs><linearGradient id="s3" x1="0" y1="0" x2="1" y2=".6"><stop offset="0" stop-color="#4568b0"/><stop offset=".45" stop-color="#8097d0"/><stop offset="1" stop-color="#b9c3e6"/></linearGradient><linearGradient id="s3b" x1="0" y1="0" x2="0" y2="1"><stop offset="0" stop-color="#b4c0e6" stop-opacity="0"/><stop offset="1" stop-color="#b4c0e6" stop-opacity=".75"/></linearGradient><linearGradient id="w3" x1="0" y1="0" x2="0" y2="1"><stop offset="0" stop-color="#3567b4"/><stop offset=".5" stop-color="#2c5aa8"/><stop offset="1" stop-color="#1d3f82"/></linearGradient><linearGradient id="w3b" x1="0" y1="0" x2="1" y2="0"><stop offset="0" stop-color="#142c60" stop-opacity=".7"/><stop offset=".5" stop-color="#142c60" stop-opacity="0"/></linearGradient><linearGradient id="g3" x1="0" y1="0" x2="0" y2="1"><stop offset="0" stop-color="#000" stop-opacity="0"/><stop offset=".5" stop-color="#000" stop-opacity=".04"/><stop offset=".76" stop-color="#00040c" stop-opacity=".5"/><stop offset="1" stop-color="#000" stop-opacity=".9"/></linearGradient><linearGradient id="r3" x1="0" y1="0" x2="0" y2="1"><stop offset="0" stop-color="#4a5378"/><stop offset="1" stop-color="#1a1d2c"/></linearGradient><filter id="b3" x="-5%" y="-5%" width="110%" height="110%"><feGaussianBlur stdDeviation=".7"/></filter></defs><rect width="200" height="48" fill="url(#s3)"/><rect y="18" width="200" height="30" fill="url(#s3b)"/><g filter="url(#b3)"><rect y="44" width="200" height="96" fill="url(#w3)"/><rect y="44" width="200" height="96" fill="url(#w3b)"/><path d="M0 43Q20 42 40 42.500T80 43T118 44.500V46.500H0z" fill="#3c5f9c"/><path d="M121 45Q134 40 150 39T166 37V52Q150 48 121 45z" fill="#3a5d9e"/><!-- right wall --><path d="M166 30H174V27H182V24H190V21H200V76H166z" fill="#c6cbe2"/><path d="M166 30H172V76H166z" fill="#d8dcee"/><path d="M140 74L166 64V78L146 82z" fill="#6c86c0"/><!-- shadow right --><path d="M164 76L200 68V140H150z" fill="url(#r3)"/><!-- terrace --><path d="M15 90L127 78L168 74V140H15z" fill="#8e95ae"/><path d="M15 90L127 78L132 80L60 92L20 100z" fill="#b4b9cc"/><path d="M127 78L168 74V82L130 88z" fill="#5f6f9c"/><!-- table --><path d="M43 98L112 86L165 84V90L110 100L44 112z" fill="#c4c6d2"/><path d="M44 112L110 100V104L46 118z" fill="#777c90"/><path d="M86 88L100 86L118 87L112 92H92z" fill="#595c68"/><!-- plant --><path d="M66 88H76L75 98H67z" fill="#b8906c"/><path d="M63 80L68 76L71 82L75 76L80 80L76 88H66z" fill="#4f8a3a"/><!-- benches --><path d="M85 106L112 102L118 108L90 114z" fill="#b0b0b8"/><rect x="91" y="113" width="14" height="14" fill="#8f8370"/><path d="M118 100L140 98L146 104L124 108z" fill="#a8a8b2"/><rect x="126" y="107" width="10" height="14" fill="#857a6a"/><path d="M152 94L174 92L178 96L156 99z" fill="#a5a5b0"/><rect x="158" y="98" width="8" height="16" fill="#7d7466"/><path d="M36 104L44 102V130H36z" fill="#a9aec2"/></g><rect width="200" height="140" fill="url(#g3)"/></svg><!--/C3--><div class="ov"></div></div>
 <div class="card" id="c4" style="left:249.500px;top:481.400px"><!--C4--><svg width="200" height="140" viewBox="0 0 200 140"><defs><linearGradient id="s4" x1="0" y1="0" x2="0" y2="1"><stop offset="0" stop-color="#15171f"/><stop offset=".28" stop-color="#1d1e2a"/><stop offset=".45" stop-color="#3a2b30"/><stop offset=".58" stop-color="#6b4636"/><stop offset=".66" stop-color="#8a5c3c"/><stop offset=".76" stop-color="#5a4230"/><stop offset="1" stop-color="#0a0a0c"/></linearGradient><linearGradient id="s4b" x1="0" y1="0" x2="1" y2="0"><stop offset="0" stop-color="#000" stop-opacity=".4"/><stop offset=".45" stop-color="#000" stop-opacity="0"/></linearGradient><linearGradient id="g4" x1="0" y1="0" x2="0" y2="1"><stop offset="0" stop-color="#000" stop-opacity="0"/><stop offset=".62" stop-color="#000" stop-opacity=".1"/><stop offset=".85" stop-color="#000" stop-opacity=".6"/><stop offset="1" stop-color="#000" stop-opacity=".85"/></linearGradient><filter id="b4" x="-5%" y="-5%" width="110%" height="110%"><feGaussianBlur stdDeviation=".6"/></filter><filter id="b4b" x="-30%" y="-30%" width="160%" height="160%"><feGaussianBlur stdDeviation="3"/></filter></defs><rect width="200" height="140" fill="url(#s4)"/><rect width="200" height="140" fill="url(#s4b)"/><ellipse cx="75" cy="92" rx="70" ry="9" fill="#d09a58" opacity=".4" filter="url(#b4b)"/><g filter="url(#b4)"><path d="M97 15L98.200 30H95.800z" fill="#f4fff8"/><path d="M95 28H99L100.300 42H93.700z" fill="#d6f6e8"/><path d="M91.5 44.0H102.5L101.8 50.0H92.2z" fill="#33806a"/><path d="M91.3 50.2H102.7L101.9 56.2H92.1z" fill="#2c6e58"/><path d="M91.1 56.4H102.9L102.1 62.4H91.9z" fill="#33806a"/><path d="M90.9 62.6H103.1L102.3 68.6H91.7z" fill="#2c6e58"/><path d="M90.8 68.8H103.2L102.5 74.8H91.5z" fill="#33806a"/><path d="M90.6 75.0H103.4L102.6 81.0H91.4z" fill="#2c6e58"/><path d="M90.4 81.2H103.6L102.8 87.2H91.2z" fill="#33806a"/><path d="M90.2 87.4H103.8L103.0 93.4H91.0z" fill="#2c6e58"/><rect x="100.4" y="95.4" width="1.200" height=".8" fill="#9ff0c8" opacity="0.43"/><rect x="92.8" y="49.9" width="1.200" height=".8" fill="#9ff0c8" opacity="0.55"/><rect x="98.7" y="67.8" width="1.200" height=".8" fill="#9ff0c8" opacity="0.42"/><rect x="96.0" y="76.6" width="1.200" height=".8" fill="#9ff0c8" opacity="0.64"/><rect x="99.1" y="88.2" width="1.200" height=".8" fill="#9ff0c8" opacity="0.63"/><rect x="93.2" y="87.9" width="1.200" height=".8" fill="#9ff0c8" opacity="0.45"/><rect x="97.4" y="64.0" width="1.200" height=".8" fill="#9ff0c8" opacity="0.67"/><rect x="93.9" y="57.6" width="1.200" height=".8" fill="#9ff0c8" opacity="0.42"/><rect x="93.5" y="90.1" width="1.200" height=".8" fill="#9ff0c8" opacity="0.59"/><rect x="95.1" y="65.2" width="1.200" height=".8" fill="#9ff0c8" opacity="0.80"/><rect x="96.8" y="56.8" width="1.200" height=".8" fill="#9ff0c8" opacity="0.70"/><rect x="98.2" y="95.5" width="1.200" height=".8" fill="#9ff0c8" opacity="0.35"/><rect x="96.5" y="86.8" width="1.200" height=".8" fill="#9ff0c8" opacity="0.72"/><rect x="100.7" y="47.1" width="1.200" height=".8" fill="#9ff0c8" opacity="0.45"/><rect x="93.1" y="54.7" width="1.200" height=".8" fill="#9ff0c8" opacity="0.79"/><rect x="97.5" y="92.4" width="1.200" height=".8" fill="#9ff0c8" opacity="0.49"/><rect x="100.2" y="67.9" width="1.200" height=".8" fill="#9ff0c8" opacity="0.43"/><rect x="99.4" y="93.2" width="1.200" height=".8" fill="#9ff0c8" opacity="0.35"/><rect x="97.7" y="76.6" width="1.200" height=".8" fill="#9ff0c8" opacity="0.41"/><rect x="95.5" y="52.2" width="1.200" height=".8" fill="#9ff0c8" opacity="0.40"/><rect x="94.4" y="75.6" width="1.200" height=".8" fill="#9ff0c8" opacity="0.63"/><rect x="93.9" y="45.6" width="1.200" height=".8" fill="#9ff0c8" opacity="0.46"/><rect x="98.4" y="54.4" width="1.200" height=".8" fill="#9ff0c8" opacity="0.46"/><rect x="93.9" y="85.6" width="1.200" height=".8" fill="#9ff0c8" opacity="0.57"/><rect x="92.6" y="50.2" width="1.200" height=".8" fill="#9ff0c8" opacity="0.50"/><rect x="97.2" y="77.6" width="1.200" height=".8" fill="#9ff0c8" opacity="0.35"/><rect x="93.6" y="80.5" width="1.200" height=".8" fill="#9ff0c8" opacity="0.50"/><rect x="94.7" y="60.7" width="1.200" height=".8" fill="#9ff0c8" opacity="0.78"/><rect x="95.0" y="73.9" width="1.200" height=".8" fill="#9ff0c8" opacity="0.48"/><rect x="96.0" y="89.1" width="1.200" height=".8" fill="#9ff0c8" opacity="0.80"/><rect x="95.5" y="55.1" width="1.200" height=".8" fill="#9ff0c8" opacity="0.66"/><rect x="93.9" y="45.3" width="1.200" height=".8" fill="#9ff0c8" opacity="0.75"/><rect x="96.0" y="86.8" width="1.200" height=".8" fill="#9ff0c8" opacity="0.50"/><rect x="100.4" y="68.5" width="1.200" height=".8" fill="#9ff0c8" opacity="0.38"/><rect x="92.1" y="73.1" width="1.200" height=".8" fill="#9ff0c8" opacity="0.62"/><rect x="100.6" y="49.5" width="1.200" height=".8" fill="#9ff0c8" opacity="0.61"/><rect x="95.5" y="70.7" width="1.200" height=".8" fill="#9ff0c8" opacity="0.37"/><rect x="94.7" y="71.6" width="1.200" height=".8" fill="#9ff0c8" opacity="0.76"/><rect x="93.0" y="70.0" width="1.200" height=".8" fill="#9ff0c8" opacity="0.70"/><rect x="101.2" y="55.1" width="1.200" height=".8" fill="#9ff0c8" opacity="0.36"/><path d="M90.500 92H103.500V104H90.500z" fill="#1f4a44"/><rect x="103" y="91" width="11" height="3.500" fill="#4a90e0" opacity=".8"/><rect x="70" y="81" width="6" height="12" fill="#a08050"/><rect x="40" y="86" width="10" height="8" fill="#5a4630"/><rect x="56" y="88" width="8" height="8" fill="#6a5434"/><path d="M28 94L40 90L52 92L66 88L80 92L92 90V112H28z" fill="#3a2e22"/><path d="M104 96L112 92L125 94V112H104z" fill="#3c2e22"/><rect x="40.5" y="99.9" width="2.5" height="0.9" fill="#e8b860" opacity="0.62"/><rect x="113.7" y="102.2" width="1.1" height="1.3" fill="#d8a850" opacity="0.34"/><rect x="11.3" y="82.3" width="2.7" height="1.6" fill="#e8b860" opacity="0.62"/><rect x="7.7" y="100.0" width="1.7" height="2.0" fill="#fff0c0" opacity="0.33"/><rect x="107.3" y="93.0" width="2.0" height="1.5" fill="#e8b860" opacity="0.68"/><rect x="12.9" y="97.8" width="2.2" height="1.2" fill="#fff0c0" opacity="0.60"/><rect x="7.8" y="98.4" width="2.0" height="1.7" fill="#e09a50" opacity="0.56"/><rect x="115.4" y="95.7" width="1.5" height="1.8" fill="#f0d080" opacity="0.68"/><rect x="30.5" y="86.4" width="2.3" height="1.1" fill="#f0d080" opacity="0.84"/><rect x="14.8" y="90.1" width="1.3" height="1.2" fill="#c89048" opacity="0.81"/><rect x="52.7" y="96.7" width="2.0" height="1.9" fill="#fff0c0" opacity="0.47"/><rect x="86.9" y="93.3" width="1.9" height="1.8" fill="#fff0c0" opacity="0.34"/><rect x="11.7" y="92.6" width="1.1" height="1.6" fill="#e8b860" opacity="0.66"/><rect x="124.1" y="104.7" width="1.5" height="1.3" fill="#c89048" opacity="0.67"/><rect x="2.8" y="89.9" width="1.9" height="1.1" fill="#e8b860" opacity="0.46"/><rect x="92.3" y="95.0" width="1.7" height="1.8" fill="#c89048" opacity="0.34"/><rect x="102.4" y="89.6" width="1.5" height="1.3" fill="#fff0c0" opacity="0.50"/><rect x="110.5" y="97.9" width="1.3" height="1.6" fill="#d8a850" opacity="0.31"/><rect x="103.9" y="92.9" width="1.5" height="0.8" fill="#d8a850" opacity="0.53"/><rect x="86.3" y="87.0" width="2.7" height="1.6" fill="#fff0c0" opacity="0.71"/><rect x="57.1" y="105.9" width="2.4" height="1.3" fill="#e09a50" opacity="0.52"/><rect x="79.3" y="96.4" width="1.8" height="0.9" fill="#d8a850" opacity="0.63"/><rect x="12.8" y="95.0" width="1.3" height="0.9" fill="#fff0c0" opacity="0.50"/><rect x="3.2" y="100.8" width="2.1" height="1.9" fill="#d8a850" opacity="0.63"/><rect x="59.3" y="87.1" width="2.5" height="2.0" fill="#e8b860" opacity="0.56"/><rect x="60.5" y="96.8" width="2.3" height="1.4" fill="#f0d080" opacity="0.68"/><rect x="64.5" y="95.7" width="2.7" height="1.4" fill="#d8a850" opacity="0.38"/><rect x="67.9" y="102.5" width="2.6" height="1.6" fill="#e09a50" opacity="0.44"/><rect x="45.8" y="95.5" width="1.6" height="1.1" fill="#d8a850" opacity="0.60"/><rect x="62.8" y="87.7" width="2.5" height="1.8" fill="#d8a850" opacity="0.71"/><rect x="28.3" y="86.7" width="1.9" height="1.7" fill="#fff0c0" opacity="0.84"/><rect x="98.8" y="89.5" width="2.7" height="1.3" fill="#fff0c0" opacity="0.82"/><rect x="123.5" y="94.8" width="1.1" height="0.9" fill="#f0d080" opacity="0.56"/><rect x="76.3" y="96.2" width="1.9" height="1.6" fill="#e8b860" opacity="0.74"/><rect x="10.6" y="85.8" width="2.4" height="1.4" fill="#e09a50" opacity="0.40"/><rect x="41.6" y="99.9" width="1.8" height="1.7" fill="#c89048" opacity="0.35"/><rect x="124.1" y="103.2" width="2.5" height="1.0" fill="#c89048" opacity="0.75"/><rect x="122.5" y="95.6" width="2.7" height="1.0" fill="#e09a50" opacity="0.60"/><rect x="2.7" y="97.4" width="1.9" height="1.9" fill="#e8b860" opacity="0.54"/><rect x="109.0" y="83.3" width="1.1" height="1.1" fill="#d8a850" opacity="0.58"/><rect x="95.5" y="90.0" width="1.1" height="1.7" fill="#d8a850" opacity="0.79"/><rect x="82.8" y="101.8" width="1.8" height="1.9" fill="#fff0c0" opacity="0.58"/><rect x="66.5" y="92.7" width="2.4" height="1.5" fill="#c89048" opacity="0.73"/><rect x="18.7" y="93.8" width="1.9" height="1.7" fill="#d8a850" opacity="0.61"/><rect x="40.7" y="85.1" width="2.6" height="0.9" fill="#e8b860" opacity="0.41"/><rect x="5.3" y="93.0" width="1.9" height="1.5" fill="#e8b860" opacity="0.72"/><rect x="114.1" y="85.0" width="2.1" height="1.0" fill="#fff0c0" opacity="0.45"/><rect x="63.5" y="97.4" width="1.9" height="1.1" fill="#c89048" opacity="0.59"/><rect x="109.5" y="108.2" width="2.5" height="1.0" fill="#d8a850" opacity="0.37"/><rect x="55.3" y="87.1" width="2.2" height="1.3" fill="#e8b860" opacity="0.42"/><rect x="37.8" y="102.7" width="2.2" height="1.2" fill="#e09a50" opacity="0.44"/><rect x="17.2" y="102.4" width="1.4" height="1.9" fill="#c89048" opacity="0.52"/><rect x="60.9" y="107.2" width="2.3" height="2.0" fill="#d8a850" opacity="0.52"/><rect x="52.7" y="93.2" width="1.6" height="1.7" fill="#f0d080" opacity="0.31"/><rect x="69.3" y="92.8" width="1.9" height="1.2" fill="#f0d080" opacity="0.83"/><rect x="14.1" y="94.5" width="2.7" height="0.9" fill="#d8a850" opacity="0.45"/><rect x="4.9" y="95.0" width="2.5" height="1.8" fill="#d8a850" opacity="0.67"/><rect x="118.3" y="88.5" width="1.3" height="1.9" fill="#c89048" opacity="0.61"/><rect x="87.6" y="96.0" width="1.3" height="1.9" fill="#e09a50" opacity="0.45"/><rect x="2.1" y="95.3" width="2.4" height="0.9" fill="#e8b860" opacity="0.77"/><rect x="8.3" y="99.0" width="2.8" height="1.3" fill="#f0d080" opacity="0.80"/><rect x="77.7" y="88.2" width="1.9" height="1.1" fill="#e8b860" opacity="0.36"/><rect x="20.2" y="98.5" width="2.1" height="1.4" fill="#f0d080" opacity="0.41"/><rect x="55.7" y="95.5" width="1.3" height="1.2" fill="#e09a50" opacity="0.31"/><rect x="31.3" y="105.3" width="2.8" height="1.4" fill="#fff0c0" opacity="0.44"/><rect x="55.9" y="95.1" width="2.5" height="1.3" fill="#e09a50" opacity="0.57"/><rect x="104.3" y="87.5" width="1.4" height="1.1" fill="#e09a50" opacity="0.41"/><rect x="110.2" y="99.2" width="2.1" height="1.3" fill="#e09a50" opacity="0.49"/><rect x="6.8" y="95.8" width="2.6" height="1.3" fill="#e09a50" opacity="0.33"/><rect x="83.2" y="96.0" width="2.6" height="1.6" fill="#c89048" opacity="0.46"/><rect x="30.3" y="91.9" width="1.5" height="0.8" fill="#d8a850" opacity="0.50"/><rect x="41.1" y="101.5" width="1.6" height="0.8" fill="#fff0c0" opacity="0.79"/><rect x="27.2" y="96.6" width="1.9" height="1.4" fill="#e8b860" opacity="0.41"/><rect x="63.1" y="99.8" width="1.2" height="1.8" fill="#e8b860" opacity="0.38"/><rect x="73.4" y="89.4" width="1.4" height="1.5" fill="#e09a50" opacity="0.59"/><rect x="93.8" y="97.7" width="2.6" height="1.7" fill="#e09a50" opacity="0.63"/><rect x="95.5" y="92.5" width="2.3" height="1.6" fill="#f0d080" opacity="0.32"/><rect x="104.4" y="86.0" width="2.1" height="1.7" fill="#fff0c0" opacity="0.75"/><rect x="17.4" y="85.8" width="2.5" height="1.5" fill="#e8b860" opacity="0.79"/><rect x="85.4" y="92.8" width="2.2" height="0.9" fill="#e09a50" opacity="0.32"/><rect x="79.6" y="100.6" width="2.0" height="1.6" fill="#c89048" opacity="0.64"/><rect x="85.1" y="92.3" width="1.5" height="1.3" fill="#c89048" opacity="0.34"/><rect x="116.6" y="96.5" width="1.1" height="1.7" fill="#fff0c0" opacity="0.44"/><rect x="9.3" y="92.2" width="1.4" height="1.7" fill="#f0d080" opacity="0.43"/><rect x="9.6" y="97.3" width="1.5" height="0.9" fill="#e09a50" opacity="0.65"/><rect x="24.8" y="88.9" width="2.3" height="1.2" fill="#e09a50" opacity="0.61"/><rect x="1.6" y="90.3" width="1.9" height="2.0" fill="#e8b860" opacity="0.35"/><rect x="27.2" y="83.0" width="1.8" height="1.4" fill="#f0d080" opacity="0.37"/><rect x="111.7" y="94.7" width="1.6" height="0.9" fill="#d8a850" opacity="0.56"/><rect x="36.2" y="101.4" width="2.8" height="1.3" fill="#c89048" opacity="0.80"/><rect x="116.3" y="97.8" width="2.0" height="1.0" fill="#e8b860" opacity="0.59"/><rect x="119.1" y="102.7" width="1.5" height="0.9" fill="#fff0c0" opacity="0.50"/><rect x="62.2" y="103.6" width="1.7" height="1.0" fill="#c89048" opacity="0.82"/><rect x="85.2" y="84.7" width="1.6" height="1.2" fill="#c89048" opacity="0.76"/><rect x="0.2" y="100.3" width="2.5" height="0.9" fill="#f0d080" opacity="0.81"/><rect x="89.1" y="98.7" width="1.1" height="1.3" fill="#f0d080" opacity="0.78"/><rect x="9.6" y="90.6" width="2.4" height="1.8" fill="#c89048" opacity="0.45"/><rect x="6.5" y="88.8" width="1.4" height="1.1" fill="#d8a850" opacity="0.58"/><rect x="23.7" y="85.5" width="2.4" height="1.3" fill="#f0d080" opacity="0.32"/><rect x="95.2" y="82.4" width="2.0" height="1.7" fill="#fff0c0" opacity="0.33"/><rect x="91.5" y="102.4" width="2.1" height="1.0" fill="#c89048" opacity="0.78"/><rect x="60.7" y="101.5" width="1.8" height="1.2" fill="#d8a850" opacity="0.46"/><rect x="92.4" y="89.3" width="1.5" height="1.6" fill="#e09a50" opacity="0.47"/><rect x="69.7" y="90.7" width="1.1" height="1.4" fill="#d8a850" opacity="0.75"/><rect x="68.8" y="96.6" width="2.6" height="2.0" fill="#c89048" opacity="0.55"/><rect x="17.4" y="95.1" width="2.0" height="1.2" fill="#f0d080" opacity="0.50"/><rect x="101.2" y="96.9" width="2.6" height="1.7" fill="#d8a850" opacity="0.53"/><rect x="51.7" y="87.3" width="2.4" height="1.4" fill="#f0d080" opacity="0.62"/><rect x="45.0" y="93.0" width="1.9" height="1.6" fill="#e09a50" opacity="0.77"/><rect x="27.0" y="93.3" width="2.2" height="1.3" fill="#c89048" opacity="0.47"/><rect x="101.8" y="99.2" width="1.2" height="1.3" fill="#e8b860" opacity="0.72"/><rect x="100.5" y="102.0" width="1.7" height="1.9" fill="#e8b860" opacity="0.75"/><rect x="106.9" y="92.4" width="1.4" height="0.9" fill="#c89048" opacity="0.38"/><rect x="65.3" y="87.1" width="2.3" height="1.8" fill="#e09a50" opacity="0.79"/><rect x="97.1" y="97.6" width="2.7" height="1.6" fill="#fff0c0" opacity="0.47"/><rect x="16.0" y="94.0" width="2.0" height="1.3" fill="#f0d080" opacity="0.72"/><rect x="12.4" y="88.8" width="1.7" height="1.1" fill="#d8a850" opacity="0.63"/><rect x="1.3" y="110.0" width="2.8" height="1.1" fill="#f0d080" opacity="0.47"/><rect x="104.9" y="94.4" width="1.4" height="2.0" fill="#fff0c0" opacity="0.69"/><rect x="38.4" y="102.5" width="1.3" height="1.9" fill="#e8b860" opacity="0.66"/><rect x="10.1" y="95.0" width="1.4" height="0.8" fill="#f0d080" opacity="0.49"/><rect x="52.6" y="101.3" width="1.7" height="0.8" fill="#e09a50" opacity="0.46"/><rect x="105.6" y="101.5" width="1.6" height="1.8" fill="#d8a850" opacity="0.43"/><rect x="27.7" y="97.4" width="1.2" height="1.5" fill="#f0d080" opacity="0.64"/><rect x="7.1" y="95.4" width="1.3" height="1.3" fill="#fff0c0" opacity="0.42"/><rect x="121.8" y="95.4" width="1.3" height="1.3" fill="#e8b860" opacity="0.69"/><rect x="39.3" y="95.8" width="2.8" height="1.9" fill="#e8b860" opacity="0.48"/><rect x="23.2" y="104.7" width="1.6" height="1.7" fill="#e8b860" opacity="0.76"/><rect x="123.1" y="89.5" width="1.3" height="0.8" fill="#c89048" opacity="0.45"/><rect x="43.9" y="97.5" width="1.7" height="1.7" fill="#d8a850" opacity="0.47"/><rect x="100.5" y="93.0" width="1.1" height="1.4" fill="#e8b860" opacity="0.50"/><rect x="114.9" y="96.3" width="1.1" height="1.3" fill="#c89048" opacity="0.75"/><rect x="95.8" y="100.2" width="1.7" height="1.4" fill="#e8b860" opacity="0.74"/><rect x="7.8" y="94.9" width="1.6" height="1.1" fill="#fff0c0" opacity="0.83"/><rect x="77.1" y="96.4" width="2.3" height="1.6" fill="#f0d080" opacity="0.81"/><rect x="37.2" y="92.3" width="2.7" height="0.9" fill="#e09a50" opacity="0.75"/><rect x="13.4" y="84.7" width="2.7" height="1.9" fill="#e09a50" opacity="0.51"/><rect x="31.4" y="86.6" width="1.3" height="1.8" fill="#c89048" opacity="0.71"/><rect x="102.8" y="97.5" width="2.1" height="1.2" fill="#d8a850" opacity="0.48"/><rect x="45.2" y="94.6" width="1.7" height="1.0" fill="#d8a850" opacity="0.52"/><rect x="81.2" y="91.2" width="2.0" height="1.2" fill="#c89048" opacity="0.84"/><path d="M0 77H12V73H30V92L34 96V140H0z" fill="#0b0b0f"/><rect x="10" y="82" width="8" height="2" fill="#e8e0b0"/><rect x="4" y="88" width="12" height="1.500" fill="#b0a070" opacity=".7"/><rect x="14" y="104" width="6" height="1.500" fill="#c0b070" opacity=".7"/><rect x="14" y="110" width="5" height="1.500" fill="#a09060" opacity=".6"/><path d="M30 104L44 100L60 103L64 98L86 96L90 104L110 102L125 106V140H30z" fill="#0f0f13"/></g><rect width="200" height="140" fill="url(#g4)"/></svg><!--/C4--><div class="ov"></div></div>

 <!-- card labels -->
 <svg style="left:47.800px;top:291.800px" width="15" height="24" viewBox="0 0 16 24" preserveAspectRatio="none"><path d="M1.500 0h13A1.500 1.500 0 0 1 16 1.500V23.300l-8-6.300-8 6.300V1.500A1.500 1.500 0 0 1 1.500 0z" fill="#fff"/></svg>
 <svg style="left:267px;top:292px" width="16" height="24" viewBox="0 0 16 24"><path d="M2.500 1.200h11a1.300 1.300 0 0 1 1.300 1.300v18.800L8 15.600l-6.800 5.700V2.500a1.300 1.300 0 0 1 1.300-1.300z" fill="none" stroke="#fff" stroke-width="2.200" stroke-linejoin="round"/></svg>
 <div class="ct" id="t1" style="left:46px;top:390.300px">Oasis Palace</div>
 <svg style="left:143.500px;top:392.500px" width="13" height="12" viewBox="0 0 13 12"><path d="M6.500 0l1.900 4.100 4.500.5-3.300 3.100.9 4.400-4-2.200-4 2.200.9-4.400L.1 4.600l4.500-.5z" fill="#f79a1e"/></svg>
 <div class="t" style="left:160px;top:390.500px;font-size:10.500px;font-weight:bold;color:#8a8a8a;letter-spacing:.9px">4.41</div>
 <div class="ct" id="t2" style="left:266px;top:390.300px">Sunset Hotel</div>
 <svg style="left:366px;top:392.500px" width="13" height="12" viewBox="0 0 13 12"><path d="M6.500 0l1.900 4.100 4.500.5-3.300 3.100.9 4.400-4-2.200-4 2.200.9-4.400L.1 4.600l4.500-.5z" fill="#f79a1e"/></svg>
 <div class="ct" id="t3" style="left:46px;top:592px">Seaside</div>
 <div class="ct" id="t4" style="left:266px;top:592px">Nightlife</div>
 <!-- sun -->
 <svg style="left:42.500px;top:493.300px" width="25" height="25" viewBox="-12.500 -12.500 25 25"><circle r="5.700" fill="#fff"/><g stroke="#fff" stroke-width="2.300" stroke-linecap="round"><path d="M0-9.300v-2M0 9.300v2M-9.300 0h-2M9.300 0h2M-6.600-6.600l-1.400-1.400M6.600 6.600l1.400 1.400M-6.600 6.600l-1.400 1.400M6.600-6.600l1.400-1.400"/></g></svg>
 <!-- moon -->
 <svg style="left:262px;top:492px" width="26" height="25" viewBox="0 0 26 25"><defs><mask id="mm"><rect width="26" height="25" fill="#fff"/><circle cx="15.600" cy="9.800" r="7" fill="#000"/></mask></defs><circle cx="11.200" cy="13.700" r="10" fill="#fff" mask="url(#mm)"/><path d="M20.200 4.300l1.150 3.350 3.350 1.150-3.350 1.150-1.150 3.350-1.150-3.350-3.350-1.150 3.350-1.150z" fill="#fff"/><path d="M14.500 .2l.75 1.850 1.850.75-1.850.75-.75 1.850-.75-1.850-1.850-.75 1.850-.75z" fill="#fff"/></svg>
 <!-- view all -->
 <div class="a" style="left:30px;top:641.500px;width:314px;height:47.500px;border-radius:6px;background:#2a2a2a"></div>
 <div class="sec" id="va" style="left:154.500px;top:658px;color:#e4e4e4;font-size:11px;letter-spacing:1.500px">VIEW ALL</div>
 <!-- tab bar -->
 <div class="a" style="left:0;top:715px;width:375px;height:62px;background:#1b1b1b"></div>
 <svg style="left:53.500px;top:737px" width="27" height="23" viewBox="0 0 27 23"><path fill="#2ec4bd" fill-rule="evenodd" d="M1.800 0h13.400A1.800 1.800 0 0 1 17 1.800V23H0V1.800A1.800 1.800 0 0 1 1.800 0zM3.300 3.200v3.400h3.600V3.200zM10.100 3.200v3.400h3.600V3.200zM3.300 8.600v3.400h3.600V8.600zM10.100 8.600v3.400h3.600V8.600zM3.300 14v3.400h3.600V14zM10.100 14v3.400h3.600V14zM6.200 18v3.600h4.600V18z"/><path fill="#2ec4bd" fill-rule="evenodd" d="M18.300 5.500h6.200A1.500 1.500 0 0 1 26 7v16h-7.700zM20.600 8.600v2.600h3V8.600zM20.600 13.100v2.600h3v-2.600zM20.600 17.600v2.600h3v-2.600z"/></svg>
 <svg style="left:174.500px;top:737px" width="26" height="22" viewBox="0 0 26 22"><path fill="#c6c6c6" d="M25.600 11c0-1.100-1.100-1.800-2.600-1.800h-6.200L10.600.3H7.800l3 8.900H5.600L3.300 6.500H1l1.500 4.500L1 15.500h2.300l2.300-2.700h5.200l-3 8.900h2.800l6.200-8.900H23c1.500 0 2.600-.7 2.600-1.800z"/></svg>
 <svg style="left:295.200px;top:737px" width="22" height="22" viewBox="0 0 22 22"><circle cx="11" cy="11" r="10.800" fill="#c6c6c6"/><circle cx="11" cy="8.200" r="3.700" fill="#1b1b1b"/><path d="M4.500 16.400c1.300-2.200 3.700-3.300 6.500-3.300s5.200 1.100 6.500 3.300A8.600 8.600 0 0 1 11 19.400a8.600 8.600 0 0 1-6.500-3z" fill="#1b1b1b"/></svg>
</div>

<!--INSPECTOR-->
<style>
.ii{stroke:#b0b0b0;stroke-width:1;fill:none}
.fld{position:absolute;height:19.500px;border-radius:4px;background:#f7f7f7}
.fl{position:absolute;font-size:8.500px;color:#b4b4b4;line-height:10px;white-space:nowrap}
.isep{position:absolute;left:1214.500px;width:228.500px;height:1px;background:#ececec}
.ih{position:absolute;left:1214px;font-size:11px;font-weight:bold;color:#3e3e3e;white-space:nowrap;line-height:14px;letter-spacing:.1px}
</style>
<svg style="left:1216.0px;top:52.0px" width="13" height="12" viewBox="0 0 13 12"><path class="ii" d="M.5 0v12M12.500 0v12"/><rect class="ii" x="4.500" y="3" width="4" height="6" rx=".8" fill="#f0f0f0"/></svg>
<svg style="left:1243.5px;top:52.0px" width="13" height="12" viewBox="0 0 13 12"><path class="ii" d="M0 .5h13M0 11.500h13"/><rect class="ii" x="3" y="4" width="7" height="4" rx=".8" fill="#f0f0f0"/></svg>
<svg style="left:1268.0px;top:53.0px" width="3" height="10" viewBox="0 0 3 10"><g fill="#b5b5b5"><circle cx="1.500" cy="1.200" r=".9"/><circle cx="1.500" cy="5" r=".9"/><circle cx="1.500" cy="8.800" r=".9"/></g></svg>
<svg style="left:1283.0px;top:52.0px" width="13" height="12" viewBox="0 0 13 12"><path class="ii" d="M.5 0v12"/><rect class="ii" x="2.500" y="4" width="9" height="4" rx=".8" fill="#f0f0f0"/></svg>
<svg style="left:1310.0px;top:52.0px" width="13" height="12" viewBox="0 0 13 12"><path class="ii" d="M6.500 0v12"/><rect class="ii" x="1.500" y="4" width="10" height="4" rx=".8" fill="#f0f0f0"/></svg>
<svg style="left:1337.0px;top:52.0px" width="13" height="12" viewBox="0 0 13 12"><path class="ii" d="M12.500 0v12"/><rect class="ii" x="1.500" y="4" width="9" height="4" rx=".8" fill="#f0f0f0"/></svg>
<svg style="left:1364.0px;top:51.5px" width="13" height="13" viewBox="0 0 13 13"><path class="ii" d="M0 .5h13"/><rect class="ii" x="4.500" y="2.500" width="4" height="9" rx=".8" fill="#f0f0f0"/></svg>
<svg style="left:1391.0px;top:51.5px" width="13" height="13" viewBox="0 0 13 13"><path class="ii" d="M0 6.500h13"/><rect class="ii" x="4.500" y="1.500" width="4" height="10" rx=".8" fill="#f0f0f0"/></svg>
<svg style="left:1418.0px;top:51.5px" width="13" height="13" viewBox="0 0 13 13"><path class="ii" d="M0 12.500h13"/><rect class="ii" x="4.500" y="1.500" width="4" height="9" rx=".8" fill="#f0f0f0"/></svg>
<div class="fld" style="left:1214.5px;top:77.300px;width:62px"></div><div class="fl" style="left:1264.5px;top:83.500px">X</div>
<div class="fld" style="left:1292.5px;top:77.300px;width:62px"></div><div class="fl" style="left:1342.5px;top:83.500px">Y</div>
<div class="fld" style="left:1370.5px;top:77.300px;width:62px"></div><div class="fl" style="left:1421.5px;top:83.500px">°</div>
<div class="fld" style="left:1214.5px;top:109px;width:62px"></div><div class="fl" style="left:1263px;top:115.200px">W</div>
<div class="fld" style="left:1292.5px;top:109px;width:62px"></div><div class="fl" style="left:1342px;top:115.200px">H</div>
<div class="fld" style="left:1370.500px;top:109px;width:27.500px"></div><div class="fld" style="left:1405px;top:109px;width:27.500px"></div>
<svg style="left:1378px;top:113px" width="13" height="11" viewBox="0 0 13 11"><path class="ii" d="M5.200.8v9.400H.8zM7.800.8v9.400h4.400z" stroke-linejoin="round" fill="#e6e6e6"/></svg>
<svg style="left:1412.500px;top:113px" width="12" height="12" viewBox="0 0 12 12"><path class="ii" d="M.8 5.200h10.400L.8 .8zM.8 7.600h10.400L.8 11.200z" stroke-linejoin="round" fill="#e6e6e6"/></svg>
<div class="isep" style="top:140px;left:1203px;width:240px"></div>
<div class="ih" style="top:148.500px;font-weight:normal;font-size:9.500px;color:#707070;letter-spacing:.7px">STYLE</div>
<svg style="left:1419.500px;top:152.500px" width="10" height="6" viewBox="0 0 10 6"><path d="M.7.700l4.300 4.200L9.300.7" stroke="#7a7a7a" stroke-width="1.100" fill="none"/></svg>
<div class="isep" style="top:171px"></div>
<div class="isep" style="top:203px"></div>
<div class="isep" style="top:234.7px"></div>
<div class="isep" style="top:266.7px"></div>
<div class="isep" style="top:298.4px"></div>
<div class="ih" style="top:179.7px">Fills</div>
<svg style="left:1419px;top:181.5px" width="11" height="11" viewBox="0 0 11 11"><path d="M5.500 0v11M0 5.500h11" stroke="#6a6a6a" stroke-width="1"/></svg>
<div class="ih" style="top:211.7px">Borders</div>
<svg style="left:1419px;top:213.5px" width="11" height="11" viewBox="0 0 11 11"><path d="M5.500 0v11M0 5.500h11" stroke="#6a6a6a" stroke-width="1"/></svg>
<div class="ih" style="top:243.5px">Shadows</div>
<svg style="left:1419px;top:245.3px" width="11" height="11" viewBox="0 0 11 11"><path d="M5.500 0v11M0 5.500h11" stroke="#6a6a6a" stroke-width="1"/></svg>
<div class="ih" style="top:275.6px">Inner Shadows</div>
<svg style="left:1419px;top:277.4px" width="11" height="11" viewBox="0 0 11 11"><path d="M5.500 0v11M0 5.500h11" stroke="#6a6a6a" stroke-width="1"/></svg>
<div class="ih" style="top:307.6px">Blur</div>
<svg style="left:1419px;top:309.4px" width="11" height="11" viewBox="0 0 11 11"><path d="M5.500 0v11M0 5.500h11" stroke="#6a6a6a" stroke-width="1"/></svg>

<!--RIGHT-->
<style>
#rbg{left:1443px;top:1.500px;width:365px;height:60px;background:linear-gradient(90deg,#fd6a43 0%,#ff7034 50%,#ff7a23 100%)}
#win{left:1443px;top:45.600px;width:359.700px;height:826px;background:#fff;border-radius:0 10px 0 0;overflow:hidden}
#win .tb{left:0;top:0;width:100%;height:32.400px;background:linear-gradient(#ccd1d8,#dcdee0)}
#win .ub{left:0;top:32.400px;width:100%;height:33.300px;background:#f4f4f4}
#win .url{left:-5px;top:37.400px;width:183px;height:24px;background:#fff;border-radius:4px}
#win .lp{left:0;top:65.700px;width:101.500px;height:760px;background:linear-gradient(90deg,#e9e9e9 0,#f6f6f6 6px,#fdfdfd 18px,#fff 30px)}
#win .lp2{left:0;top:65.700px;width:101.500px;height:42px;background:#fff;border-bottom:1px solid #eeeeee}
#win .cp{left:101px;top:65.700px;width:259px;height:760px;background:#fafafa;border-left:1px solid #ececec}
.cm{position:absolute;font-size:11.500px;color:#5e5e5e;white-space:nowrap;line-height:16px;letter-spacing:.3px;-webkit-text-stroke:.15px #5e5e5e}
.code{font-family:"Liberation Mono",monospace;font-weight:bold;font-size:11px;letter-spacing:0;color:#3a3a3a;-webkit-text-stroke:0;background:#f2f2f2;border:1px solid #e4e4e4;border-radius:3px;padding:2px 3.500px 1.500px 3.500px;margin:0 3.600px 0 3.700px}
.cn{position:absolute;font-size:11px;font-weight:bold;color:#2c2c2c;white-space:nowrap;line-height:14px;letter-spacing:.2px}
.ctm{position:absolute;font-size:9.600px;color:#9a9a9a;white-space:nowrap;line-height:14px}
.tab{position:absolute;font-size:11px;font-weight:bold;color:#6a6a6a;white-space:nowrap;line-height:14px;letter-spacing:.1px}
</style>
<div class="a" id="rbg"></div><div class="a" style="left:1801px;top:50px;width:7px;height:821px;background:linear-gradient(#ff721f 0,#f5803c 40%,#f0905a 70%,#efa880 100%)"></div><div class="a" style="left:1802.700px;top:56px;width:1px;height:815px;background:rgba(140,80,40,.45)"></div>
<div class="a" id="win"><div class="a tb"></div><div class="a ub"></div><div class="a url"></div>
<div class="a" style="left:144px;top:42.500px;width:1px;height:15px;background:#b9aaa8"></div>
<svg style="left:154.500px;top:41px" width="14" height="16.500" viewBox="0 0 14 16.500"><path d="M7 .3l2.300.1 1.300 1.300 1.700-.3 1.400 1.700-.6 1.500.6 2.500-1.400 4.800c-.3.900-.8 1.500-1.600 2L7 16.200l-3.700-2.300c-.8-.5-1.300-1.100-1.600-2L.3 7.100l.6-2.500L.3 3.100l1.400-1.700 1.700.3L4.700.4z" fill="#ec432a"/><path d="M7 3.200l1.800.2 1.700 1.100-.5 1.500.4 1.400-1.600 1.500.3 1.200L7 11.700 4.900 10.100l.3-1.200-1.600-1.500.4-1.400-.5-1.500 1.700-1.100z" fill="#fff"/><path d="M7 6.200l1.300.3-.4 1.600-.9.500-.9-.5-.4-1.600zM5 5.200l1.200.3-.5.800zM9 5.200l-1.200.3.500.8zM6.100 10.200l.9-.5.900.5-.9.700z" fill="#ec432a"/></svg>
<svg style="left:336.500px;top:43.500px" width="8.500" height="12" viewBox="0 0 8.500 12"><path d="M0 .9h8.500M0 6h8.500M0 11.100h8.500" stroke="#444" stroke-width="1.400"/></svg>
<div class="a lp"></div><div class="a lp2"></div><div class="a cp"></div>
<div class="a" style="left:11.300px;top:73.200px;width:34px;height:27px;border-radius:4px;background:#faefe5"></div>
<svg style="left:20px;top:78px" width="17" height="17" viewBox="0 0 17 17"><path d="M9.800 1.200l6 6-1.300.5-1.700-.6-2.500 2.900.3 2.800-1.200 1-6.300-6.300 1-1.200 2.800.3 2.900-2.500-.6-1.700z" fill="#f9dcb8" stroke="#d5862a" stroke-width="1.300" stroke-linejoin="round"/><path d="M5.700 11.300L1 16" stroke="#d5862a" stroke-width="1.400" stroke-linecap="round"/></svg>
<svg style="left:68.500px;top:85.200px" width="17" height="4" viewBox="0 0 17 4"><g fill="#5a5a5a"><circle cx="2" cy="2" r="1.700"/><circle cx="8.300" cy="2" r="1.700"/><circle cx="14.600" cy="2" r="1.700"/></g></svg>
<div class="a" style="left:109.300px;top:73.200px;width:73.700px;height:27px;border-radius:5px;background:#f8ece2"></div>
<div class="tab" style="left:119.700px;top:79.600px;color:#b67d45">Comment</div>
<div class="tab" style="left:194px;top:79.600px">Version</div>
<div class="tab" style="left:256px;top:79.600px">Inspect</div>
<svg style="left:328.300px;top:80px" width="15" height="14" viewBox="0 0 15 14"><rect x=".8" y=".8" width="13.400" height="12.400" rx="1.800" fill="#ececec" stroke="#6a6a6a" stroke-width="1.300"/><path d="M9 .8v12.400" stroke="#6a6a6a" stroke-width="1.300"/><path d="M4 5l2 2-2 2" stroke="#6a6a6a" stroke-width="1.200" fill="none"/></svg>
<div class="a" style="left:101px;top:107px;width:259px;height:1px;background:#eeeeee"></div>
<div class="ctm" style="left:119.700px;top:123px;font-size:9.500px;font-weight:bold;color:#777;letter-spacing:.35px">LATEST</div>
<svg style="left:165.800px;top:124.500px" width="7" height="11" viewBox="0 0 7 11"><path d="M.9 4L3.500 1.200 6.100 4M.9 7L3.500 9.800 6.100 7" stroke="#777" stroke-width="1.200" fill="none" stroke-linecap="round" stroke-linejoin="round"/></svg>
<div class="a" style="left:318.500px;top:116.200px;width:34px;height:26.500px;border-radius:5px;background:#f8ece2"></div>
<svg style="left:329px;top:122px" width="13" height="15" viewBox="0 0 13 15"><path d="M6.500 1.800c-2.300 0-3.700 1.700-3.700 3.900v2.500L1.300 10.600c-.2.400 0 .8.500.8h9.400c.5 0 .7-.4.500-.8L10.200 8.200V5.700c0-2.200-1.400-3.900-3.700-3.900z" fill="#f6cfa0" stroke="#cf7a22" stroke-width="1.300" stroke-linejoin="round"/><path d="M6.500 1.800V.6M5.300 13.200h2.400" stroke="#cf7a22" stroke-width="1.300" stroke-linecap="round"/></svg>
<svg style="left:119.70px;top:154.10px" width="20.80" height="20.80" viewBox="-10.40 -10.40 20.80 20.80"><defs><clipPath id="cavt"><circle r="10.40"/></clipPath></defs><g clip-path="url(#cavt)" transform="scale(1.040)"><rect x="-10" y="-10" width="20" height="20" fill="#2b2020"/><path d="M-7.500 10C-9-8 9-8 7.500 10z" fill="#14100f"/><ellipse cx="0" cy=".6" rx="4.400" ry="5.600" fill="#b98a72"/><path d="M-4.600-1.500C-3.500-6.500 3.500-6.500 4.600-1.500 1.800-4-1.800-4-4.600-1.500z" fill="#17110f"/><path d="M-1.800 2.800Q0 3.800 1.800 2.800" stroke="#8a4a4a" stroke-width=".9" fill="none"/><path d="M-6 10C-5 6.500-2 6 0 6.500 2 6 5 6.500 6 10z" fill="#3a2a2a"/></g></svg>
<div class="cn" style="left:148px;top:158.2px">Thais</div>
<div class="ctm" style="left:185.8px;top:158.5px;">1d</div>
<div class="cm" style="left:120.200px;top:178.9px;">I think we need to adjust the search bar</div>
<div class="cm" style="left:120.200px;top:195.5px;">here; looks like our outdated stuff rather</div>
<div class="cm" style="left:120.200px;top:212.1px;">than the new design.</div>
<div class="cm" style="left:120.200px;top:233.0px;font-size:10.200px;letter-spacing:.15px;-webkit-text-stroke:0"><b style="color:#7a7a7a">4 Replies</b><span style="color:#8c8c8c;margin-left:6.500px">4h</span></div>
<svg style="left:119.70px;top:268.90px" width="20.80" height="20.80" viewBox="-10.40 -10.40 20.80 20.80"><defs><clipPath id="cavj"><circle r="10.40"/></clipPath></defs><g clip-path="url(#cavj)" transform="scale(1.040)"><rect x="-10" y="-10" width="20" height="20" fill="#d4d3d0"/><circle cx="2" cy="2" r="10" fill="#e2e1de"/><path d="M-8 10C-7 4-3 3-1 3.500 2 3 6 4 7 10z" fill="#f4f4f3"/><ellipse cx="-1" cy="-1.200" rx="3" ry="3.800" fill="#cfa088"/><path d="M-4.200-1.800C-4.500-6.500 2.500-6.800 2.200-1.800 .5-3.800-2.500-3.800-4.200-1.800z" fill="#4b3a30"/><path d="M-2 .8h2.200" stroke="#a05050" stroke-width=".8"/></g></svg>
<div class="cn" style="left:148px;top:272.6px">Jeon-Hun</div>
<div class="ctm" style="left:209.3px;top:272.9px;">1h</div>
<div class="cm" style="left:120.200px;top:293.2px;">Big fan of this screen! It would be great</div>
<div class="cm" style="left:120.200px;top:309.5px;"><span style="letter-spacing:.1px">to use the same</span><span class="code">title style</span><span style="letter-spacing:.15px">across all</span></div>
<div class="cm" style="left:120.200px;top:326.1px;">screens.</div>
<div class="cm" style="left:120.200px;top:347.0px;font-size:10.200px;letter-spacing:.15px;-webkit-text-stroke:0"><b style="color:#7a7a7a">Reply</b></div>
<svg style="left:119.40px;top:383.10px" width="20.80" height="20.80" viewBox="-10.40 -10.40 20.80 20.80"><defs><clipPath id="cavu"><circle r="10.40"/></clipPath></defs><g clip-path="url(#cavu)" transform="scale(1.040)"><rect x="-10" y="-10" width="20" height="20" fill="#1c1d2a"/><path d="M2-10H10V10H4z" fill="#3b5f8c"/><path d="M-10 10C-9 4-3 3 0 4 3 3 7 4 8 10z" fill="#22283c"/><ellipse cx="-.5" cy="-1" rx="3.500" ry="4.500" fill="#9a5a55"/><path d="M-4.500-1.500C-5-7.500 4-7.500 3.500-1.500 1.500-4-2.500-4-4.500-1.500z" fill="#2a1c22"/><path d="M-2 1.500h3" stroke="#d04a4a" stroke-width="1"/></g></svg>
<div class="cn" style="left:148px;top:386.9px">Julia</div>
<div class="ctm" style="left:180.8px;top:387.2px;color:#d08a3c">15m<span style="display:inline-block;width:4.300px;height:4.300px;border-radius:50%;background:#d08a3c;margin-left:5.200px;position:relative;top:-1.400px"></span></div>
<div class="cm" style="left:120.200px;top:407.2px;">I'm not sure this corresponds to the</div>
<div class="cm" style="left:120.200px;top:423.8px;">agreed list? First item was &nbsp;Seaside.</div>
<div class="cm" style="left:120.200px;top:445.1px;font-size:10.200px;letter-spacing:.15px;-webkit-text-stroke:0"><b style="color:#cf7d2c;letter-spacing:-.2px">1 Reply</b><span style="color:#8c8c8c;margin-left:6.400px;letter-spacing:0">10m</span></div>
<div class="a" style="left:101px;top:769.700px;width:259px;height:1px;background:#ebebeb"></div>
<div class="cm" style="left:120.200px;top:788px;color:#7a7a7a;-webkit-text-stroke:0">Write a comment...</div>
<div class="a" style="left:300px;top:815.500px;width:49px;height:20px;border-radius:5px;background:#fff;border:1px solid #e9e9e9"></div>
<div class="a" style="left:157px;top:818.500px;width:11px;height:11px;border-radius:50%;border:1px solid #c4c4c4"></div>
<div class="a" style="left:190px;top:818.500px;width:13px;height:11px;border-radius:50%;border:1px solid #c4c4c4"></div></div>


<div class="a" id="botline"></div>
</body>
</html>
